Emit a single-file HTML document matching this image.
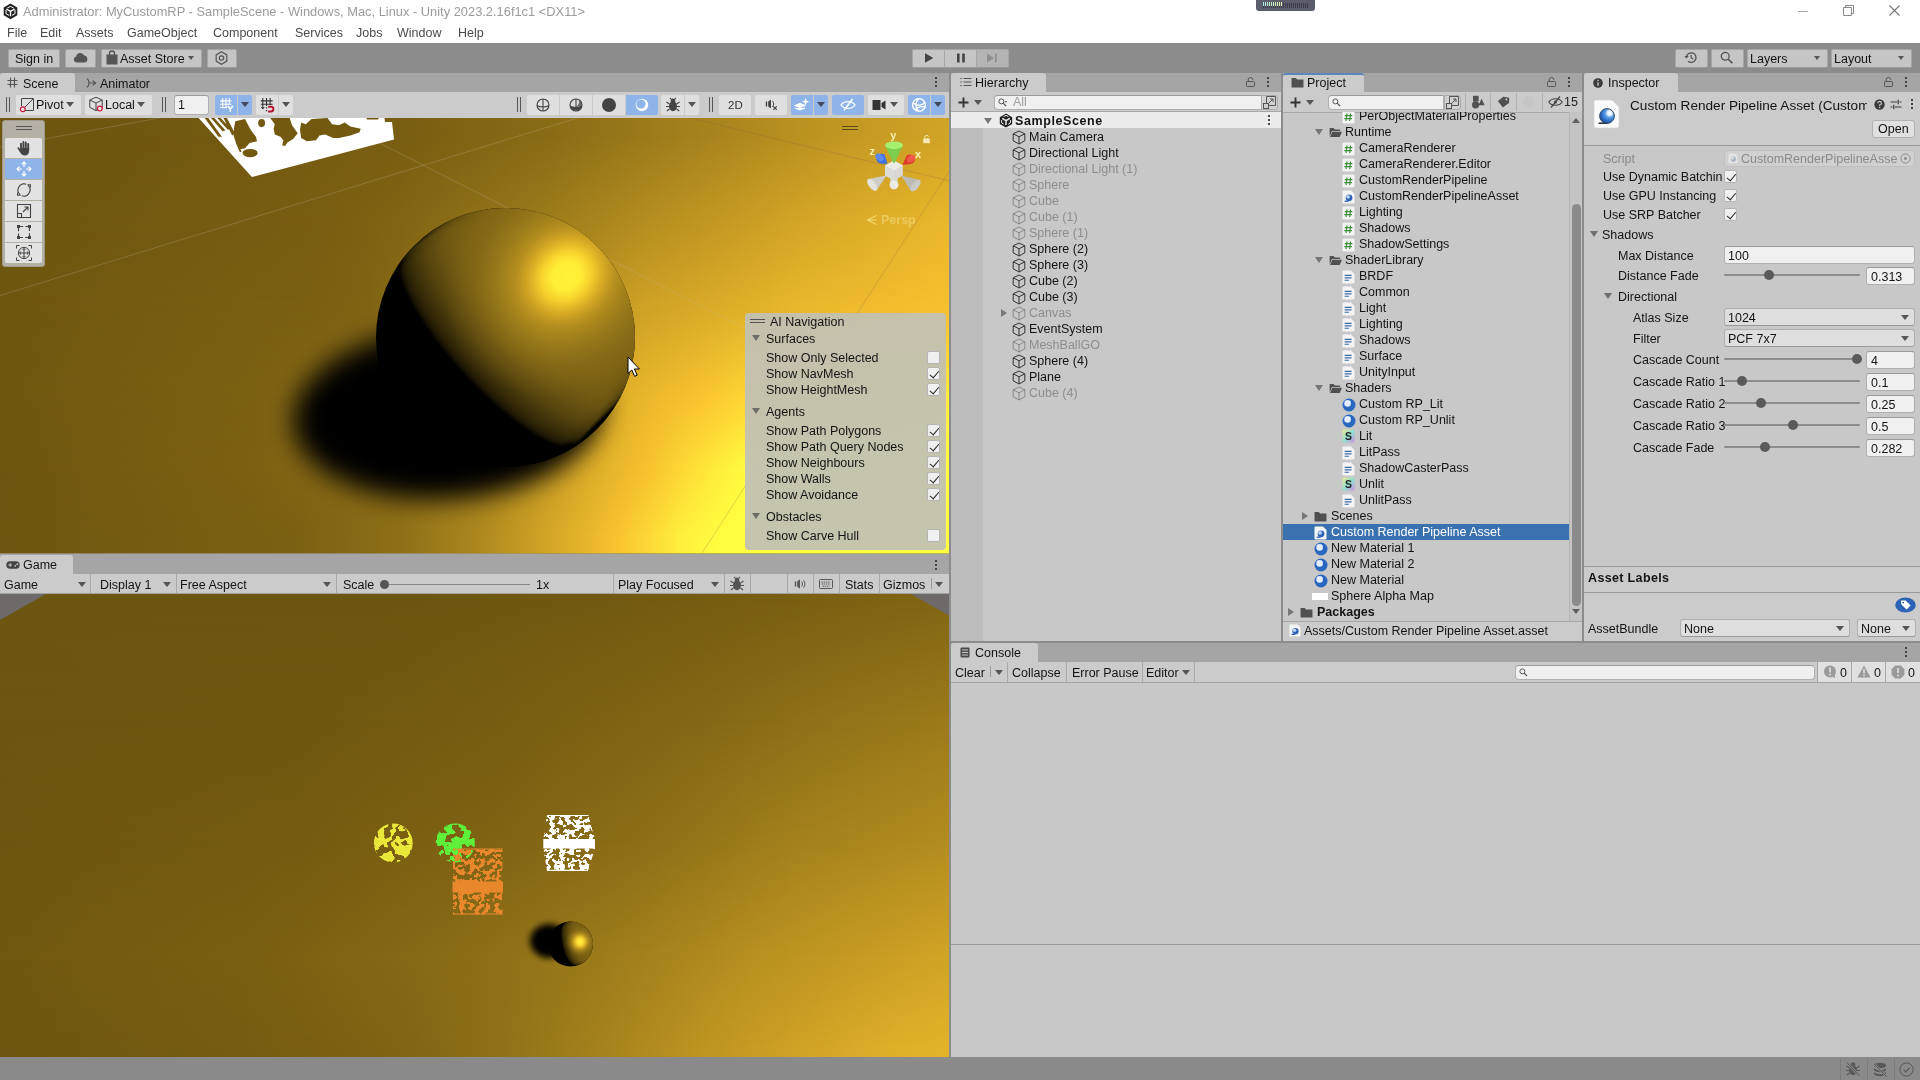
<!DOCTYPE html>
<html><head><meta charset="utf-8"><title>Unity</title>
<style>
*{box-sizing:border-box;margin:0;padding:0}
html,body{will-change:transform;width:1920px;height:1080px;overflow:hidden;background:#c8c8c8;font-family:"Liberation Sans",sans-serif;font-size:12px;color:#141414}
.a{position:absolute}
.t{position:absolute;white-space:nowrap;line-height:14px;font-size:12px;color:#141414}
.btn{position:absolute;background:#dfdfdf;border-radius:2px}
.tb{position:absolute;background:#c5c5c5;border:1px solid #a6a6a6;border-bottom-color:#999;border-radius:2px}
.blue{background:#8fb4ea}
.dim{color:#8c8c8c}
svg{position:absolute;overflow:visible}
.fld{position:absolute;background:#f0f0f0;border:1px solid #b0b0b0;border-top-color:#9a9a9a;border-radius:3px}
.dd{position:absolute;background:#dedede;border:1px solid #b0b0b0;border-bottom-color:#999;border-radius:3px}
.cb{position:absolute;width:13px;height:13px;background:#f0f0f0;border:1px solid #b5b5b5;border-radius:2px}
.tri{position:absolute;width:0;height:0;border-left:4.5px solid transparent;border-right:4.5px solid transparent;border-top:6px solid #555}
.trir{position:absolute;width:0;height:0;border-top:4.5px solid transparent;border-bottom:4.5px solid transparent;border-left:6px solid #777}
.sep{position:absolute;width:1px;background:#a8a8a8}
</style></head><body>
<!-- TITLE BAR -->
<div class="a" style="left:0;top:0;width:1920px;height:43px;background:#fff"></div>
<svg style="left:3px;top:3px" width="15" height="17" viewBox="0 0 15 17"><path d="M7.5 0.5 L14.3 4.4 V12.3 L7.5 16.3 L0.7 12.3 V4.4 Z" fill="#222"/><path d="M7.5 8.4 V13.2 M7.5 8.4 L3.3 6 M7.5 8.4 L11.7 6" stroke="#fff" stroke-width="1.4" fill="none"/><path d="M4.3 5 L7.5 3.4 L10.7 5 M3 7 V10.6 L6 12.4 M12 7 V10.6 L9 12.4" stroke="#fff" stroke-width="1" fill="none"/></svg>
<div class="t" id="title" style="left:23px;top:5px;color:#9b9b9b;font-size:12.87px">Administrator: MyCustomRP - SampleScene - Windows, Mac, Linux - Unity 2023.2.16f1c1 &lt;DX11&gt;</div>
<!-- widget -->
<div class="a" style="left:1256px;top:-3px;width:59px;height:14px;background:#5b5d6b;border-radius:3px"></div>
<div class="a" style="left:1263px;top:3px;width:46px;height:5px;background:repeating-linear-gradient(90deg,#3a3c4a 0 1px,#5b5d6b 1px 2px)"></div>
<div class="a" style="left:1263px;top:2px;width:20px;height:4px;background:repeating-linear-gradient(90deg,transparent 0 1px,#5b5d6b 1px 2px),linear-gradient(90deg,#aee8e0,#c8f0c0 50%,#e8f0a0)"></div>
<!-- window controls -->
<div class="a" style="left:1798px;top:11px;width:10px;height:1px;background:#a8a8a8"></div>
<svg style="left:1843px;top:5px" width="11" height="11" viewBox="0 0 11 11"><path d="M0.5 2.5 H8.5 V10.5 H0.5 Z M2.5 2.5 V0.5 H10.5 V8.5 H8.5" fill="none" stroke="#8a8a8a" stroke-width="1"/></svg>
<svg style="left:1889px;top:5px" width="11" height="11" viewBox="0 0 11 11"><path d="M0.5 0.5 L10.5 10.5 M10.5 0.5 L0.5 10.5" stroke="#777" stroke-width="1.1"/></svg>
<!-- MENU BAR -->
<div class="t mn" style="left:7px">File</div>
<div class="t mn" style="left:40px">Edit</div>
<div class="t mn" style="left:76px">Assets</div>
<div class="t mn" style="left:127px">GameObject</div>
<div class="t mn" style="left:213px">Component</div>
<div class="t mn" style="left:295px">Services</div>
<div class="t mn" style="left:356px">Jobs</div>
<div class="t mn" style="left:397px">Window</div>
<div class="t mn" style="left:458px">Help</div>
<style>.mn{top:26px;font-size:12.5px;color:#4a4a4a}</style>
<!-- MAIN TOOLBAR -->
<div class="a" style="left:0;top:43px;width:1920px;height:30px;background:#8c8c8d"></div>
<div class="tb" style="left:7.5px;top:48.5px;width:52px;height:19px"></div><div class="t" style="left:15px;top:51.5px;font-size:12.5px">Sign in</div>
<div class="tb" style="left:64.5px;top:48.5px;width:31px;height:19px"></div>
<svg style="left:73px;top:52px" width="15" height="11" viewBox="0 0 15 11"><path d="M3.6 10.5 A3.1 3.1 0 0 1 3.2 4.4 A4.2 4.2 0 0 1 11.2 3.6 A3.5 3.5 0 0 1 11.6 10.5 Z" fill="#555"/></svg>
<div class="tb" style="left:100.5px;top:48.5px;width:101px;height:19px"></div>
<svg style="left:106px;top:50px" width="12" height="15" viewBox="0 0 12 15"><path d="M0.5 4.5 H11.5 V14.5 H0.5 Z" fill="#555"/><path d="M3.5 5 V3.5 A2.5 2.5 0 0 1 8.5 3.5 V5" fill="none" stroke="#555" stroke-width="1.3"/></svg>
<div class="t" style="left:120px;top:51.5px;font-size:12.5px">Asset Store</div>
<div class="tri" style="left:188px;top:56px;border-left-width:3.5px;border-right-width:3.5px;border-top-width:4.5px"></div>
<div class="tb" style="left:206.5px;top:48.5px;width:30px;height:19px"></div>
<svg style="left:215px;top:51px" width="13" height="14" viewBox="0 0 13 14"><path d="M6.5 0.8 L11.8 3.9 V10.1 L6.5 13.2 L1.2 10.1 V3.9 Z" fill="none" stroke="#555" stroke-width="1.2"/><circle cx="6.5" cy="7" r="2.2" fill="none" stroke="#555" stroke-width="1.2"/></svg>
<!-- play controls -->
<div class="tb" style="left:911.5px;top:48.5px;width:34px;height:19px;border-radius:2px 0 0 2px"></div>
<div class="tb" style="left:943.5px;top:48.5px;width:34px;height:19px;border-radius:0"></div>
<div class="tb" style="left:975.5px;top:48.5px;width:33px;height:19px;border-radius:0 2px 2px 0;background:#b4b4b4"></div>
<svg style="left:924px;top:53px" width="10" height="10" viewBox="0 0 10 10"><path d="M1 0.3 L9.3 5 L1 9.7 Z" fill="#444"/></svg>
<svg style="left:956px;top:53px" width="10" height="10" viewBox="0 0 10 10"><path d="M1 0.5 H3.6 V9.5 H1 Z M6.2 0.5 H8.8 V9.5 H6.2 Z" fill="#444"/></svg>
<svg style="left:986px;top:53px" width="12" height="10" viewBox="0 0 12 10"><path d="M1 0.5 L8 5 L1 9.5 Z M9 0.5 H10.6 V9.5 H9 Z" fill="#8e8e8e"/></svg>
<!-- right -->
<div class="tb" style="left:1674.5px;top:48.5px;width:33px;height:19px"></div>
<svg style="left:1684px;top:51px" width="14" height="13" viewBox="0 0 14 13"><path d="M2.4 6.5 A4.8 4.8 0 1 1 4 10.2" fill="none" stroke="#555" stroke-width="1.3"/><path d="M0.3 5 L2.5 7.6 L4.8 5 Z" fill="#555"/><path d="M7.2 3.8 V6.8 L9.2 8" fill="none" stroke="#555" stroke-width="1.2"/></svg>
<div class="tb" style="left:1710.5px;top:48.5px;width:33px;height:19px"></div>
<svg style="left:1720px;top:51px" width="14" height="13" viewBox="0 0 14 13"><circle cx="5.2" cy="5.2" r="3.9" fill="none" stroke="#555" stroke-width="1.3"/><path d="M8 8 L12.4 12.2" stroke="#555" stroke-width="1.7"/></svg>
<div class="tb" style="left:1746.5px;top:48.5px;width:81px;height:19px"></div><div class="t" style="left:1750px;top:51.5px;font-size:12.5px">Layers</div>
<div class="tri" style="left:1814px;top:56px;border-left-width:3.5px;border-right-width:3.5px;border-top-width:4.5px"></div>
<div class="tb" style="left:1830.5px;top:48.5px;width:81px;height:19px"></div><div class="t" style="left:1834px;top:51.5px;font-size:12.5px">Layout</div>
<div class="tri" style="left:1898px;top:56px;border-left-width:3.5px;border-right-width:3.5px;border-top-width:4.5px"></div>
<!-- SCENE TAB STRIP -->
<div class="a" style="left:0;top:73px;width:949px;height:19px;background:#a5a5a5"></div>
<div class="a" style="left:0;top:73px;width:75px;height:19px;background:#cbcbcb;border-radius:3px 3px 0 0"></div>
<svg style="left:7px;top:77px" width="11" height="11" viewBox="0 0 11 11"><path d="M3.5 0.5 V10.5 M7.5 0.5 V10.5 M0.5 3.5 H10.5 M0.5 7.5 H10.5" stroke="#555" stroke-width="1.1" fill="none"/></svg>
<div class="t" style="left:23px;top:76.5px;font-size:12.5px">Scene</div>
<svg style="left:86px;top:78px" width="11" height="10" viewBox="0 0 11 10"><path d="M0.8 1 C3.5 1.2 3.5 8.6 0.8 8.8 M2.8 5 H9 M6.8 2.6 L9.6 5 L6.8 7.4" stroke="#555" stroke-width="1.2" fill="none"/></svg>
<div class="t" style="left:100px;top:76.5px;font-size:12.5px">Animator</div>
<div class="a kb" style="left:935px;top:77px"></div>
<style>.kb{width:2px;height:10px;background:radial-gradient(circle at 1px 1px,#444 0 1px,transparent 1.2px) 0 0/2px 4px repeat-y}</style>
<!-- SCENE TOOLBAR -->
<div class="a" style="left:0;top:92px;width:949px;height:26px;background:#cbcbcb"></div>
<div class="a" style="left:6px;top:97px;width:1px;height:15px;background:#555"></div><div class="a" style="left:9px;top:97px;width:1px;height:15px;background:#555"></div>
<div class="btn" style="left:16px;top:95px;width:65px;height:20px"></div>
<svg style="left:19px;top:97px" width="16" height="16" viewBox="0 0 16 16"><path d="M2.5 1.5 H14.5 V13.5 H6" fill="none" stroke="#444" stroke-width="1"/><path d="M2.5 1.5 V9 M5.5 10.5 L14 2" fill="none" stroke="#444" stroke-width="1"/><circle cx="3.8" cy="12.2" r="2.4" fill="#f6e6ea" stroke="#c8143c" stroke-width="1.2"/></svg>
<div class="t" style="left:36px;top:98px;font-size:12.5px">Pivot</div>
<div class="tri" style="left:66px;top:102px;border-left-width:4.5px;border-right-width:4.5px;border-top-width:5.5px"></div>
<div class="btn" style="left:85px;top:95px;width:67px;height:20px"></div>
<svg style="left:88px;top:96px" width="17" height="17" viewBox="0 0 17 17"><path d="M8 1.2 L14.2 4 V11.4 L8 14.6 L1.8 11.4 V4 Z M1.8 4 L8 7 L14.2 4 M8 7 V14.6" fill="none" stroke="#444" stroke-width="1"/><circle cx="11.8" cy="12.6" r="2.4" fill="#f6e6ea" stroke="#c8143c" stroke-width="1.2"/></svg>
<div class="t" style="left:105px;top:98px;font-size:12.5px">Local</div>
<div class="tri" style="left:137px;top:102px;border-left-width:4.5px;border-right-width:4.5px;border-top-width:5.5px"></div>
<div class="a" style="left:162px;top:97px;width:1px;height:15px;background:#555"></div><div class="a" style="left:165px;top:97px;width:1px;height:15px;background:#555"></div>
<div class="fld" style="left:174px;top:95px;width:35px;height:20px"></div><div class="t" style="left:178px;top:98px;font-size:12.5px">1</div>
<div class="btn blue" style="left:215px;top:95px;width:22px;height:20px;border-radius:2px 0 0 2px"></div>
<svg style="left:219px;top:97px" width="15" height="15" viewBox="0 0 15 15"><path d="M3.7 1 V11.6 M7 1 V11.6 M10.3 1 V7.4 M1 3.9 H12.6 M1 7.2 H12.6 M1 10.5 H8" stroke="#fff" stroke-width="1.1" fill="none"/><path d="M8.7 8.9 L11.3 11.8 L13.9 8.9 M11.3 11.8 V14.7" stroke="#fff" stroke-width="1.5" fill="none"/></svg>
<div class="btn blue" style="left:238px;top:95px;width:14px;height:20px;border-radius:0 2px 2px 0"></div>
<div class="tri" style="left:241px;top:102px;border-left-width:4.5px;border-right-width:4.5px;border-top-width:5.5px;border-top-color:#3e4a5a"></div>
<div class="btn" style="left:256px;top:95px;width:22px;height:20px;border-radius:2px 0 0 2px"></div>
<svg style="left:260px;top:97px" width="15" height="15" viewBox="0 0 15 15"><path d="M2.8 1 V11.6 M6.5 1 V9 M10.1 1 V8 M0.8 3.9 H12.6 M0.8 7.2 H12.6" stroke="#333" stroke-width="1.1" fill="none"/><path d="M1.4 10 L2.8 12 L4.2 10" fill="none" stroke="#333" stroke-width="1"/><path d="M5.9 10.2 h1.3 v1.3 h-1.3 Z M5.9 12.9 h1.3 v1.3 h-1.3 Z" fill="#333"/><path d="M8.2 9.7 H11 A2.4 2.4 0 0 1 11 14.5 H8.2" stroke="#b4102e" stroke-width="1.9" fill="none"/></svg>
<div class="btn" style="left:279px;top:95px;width:14px;height:20px;border-radius:0 2px 2px 0"></div>
<div class="tri" style="left:282px;top:102px;border-left-width:4.5px;border-right-width:4.5px;border-top-width:5.5px"></div>
<!-- right cluster -->
<div class="a" style="left:517px;top:97px;width:1px;height:15px;background:#555"></div><div class="a" style="left:520px;top:97px;width:1px;height:15px;background:#555"></div>
<div class="btn" style="left:527px;top:95px;width:32px;height:20px;border-radius:2px 0 0 2px"></div>
<svg style="left:536px;top:98px" width="14" height="14" viewBox="0 0 14 14"><circle cx="7" cy="7" r="6" fill="none" stroke="#444" stroke-width="1.1"/><path d="M7 1 V13 M1 7.5 C4 9.5 10 9.5 13 7.5" fill="none" stroke="#444" stroke-width="1.1"/></svg>
<div class="btn" style="left:560px;top:95px;width:32px;height:20px;border-radius:0"></div>
<svg style="left:569px;top:98px" width="14" height="14" viewBox="0 0 14 14"><circle cx="7" cy="7" r="6" fill="none" stroke="#444" stroke-width="1.1"/><path d="M7 1 V9" fill="none" stroke="#444" stroke-width="1.1"/><path d="M1.1 7.6 C4 9.4 10 9.4 12.9 7.6 A6 6 0 0 1 1.1 7.6 Z" fill="#444"/><path d="M7 9 C9 9 11.5 8.5 12.9 7.6 A6 6 0 0 0 10 2 C10.6 4 10 7 7 9 Z" fill="#444" opacity=".75"/></svg>
<div class="btn" style="left:593px;top:95px;width:32px;height:20px;border-radius:0"></div>
<div class="a" style="left:602px;top:98px;width:14px;height:14px;border-radius:50%;background:#444"></div>
<div class="btn blue" style="left:626px;top:95px;width:32px;height:20px;border-radius:0 2px 2px 0"></div>
<svg style="left:635px;top:98px" width="14" height="14" viewBox="0 0 14 14"><circle cx="7" cy="7" r="6.2" fill="#fff"/><circle cx="6" cy="6" r="4.6" fill="#8fb4ea"/></svg>
<div class="btn" style="left:661px;top:95px;width:23px;height:20px;border-radius:2px 0 0 2px"></div>
<svg style="left:665px;top:97px" width="16" height="16" viewBox="0 0 16 16"><ellipse cx="8" cy="9.2" rx="4" ry="5" fill="#444"/><circle cx="8" cy="4" r="2.4" fill="#444"/><path d="M4.5 7 L1.5 5 M4 9.5 H1 M4.5 12 L1.8 14 M11.5 7 L14.5 5 M12 9.5 H15 M11.5 12 L14.2 14 M6.5 2.5 L5 0.8 M9.5 2.5 L11 0.8" stroke="#444" stroke-width="1.1"/></svg>
<div class="btn" style="left:685px;top:95px;width:14px;height:20px;border-radius:0 2px 2px 0"></div>
<div class="tri" style="left:688px;top:102px;border-left-width:4.5px;border-right-width:4.5px;border-top-width:5.5px"></div>
<div class="a" style="left:709px;top:97px;width:1px;height:15px;background:#555"></div><div class="a" style="left:712px;top:97px;width:1px;height:15px;background:#555"></div>
<div class="btn" style="left:719px;top:95px;width:32px;height:20px"></div><div class="t" style="left:728px;top:98px;font-size:11.5px;color:#333">2D</div>
<div class="btn" style="left:755px;top:95px;width:32px;height:20px"></div>
<svg style="left:765px;top:99px" width="13" height="12" viewBox="0 0 13 12"><path d="M0.8 2.5 H2.2 V7.5 H0.8 Z M3.2 2.5 L6 0.5 V9.5 L3.2 7.5 Z" fill="#444"/><path d="M7.5 2 C9 3.5 9 6.5 7.5 8" stroke="#444" stroke-width="1" fill="none"/><path d="M8.3 7.3 L11.8 10.8 M11.8 7.3 L8.3 10.8" stroke="#444" stroke-width="1.2"/></svg>
<div class="btn blue" style="left:791px;top:95px;width:22px;height:20px;border-radius:2px 0 0 2px"></div>
<svg style="left:794px;top:97px" width="16" height="16" viewBox="0 0 16 16"><path d="M1 8.5 L6 6.5 L11 8.5 L6 10.5 Z M1 11 L6 13 L11 11" fill="#fff" stroke="#fff" stroke-width="1.2" stroke-linejoin="round"/><path d="M11.5 1 L12.5 3.8 L15.2 4.8 L12.5 5.8 L11.5 8.6 L10.5 5.8 L7.8 4.8 L10.5 3.8 Z" fill="#fff"/></svg>
<div class="btn blue" style="left:814px;top:95px;width:14px;height:20px;border-radius:0 2px 2px 0"></div>
<div class="tri" style="left:817px;top:102px;border-left-width:4.5px;border-right-width:4.5px;border-top-width:5.5px;border-top-color:#3e4a5a"></div>
<div class="btn blue" style="left:832px;top:95px;width:32px;height:20px"></div>
<svg style="left:840px;top:98px" width="16" height="14" viewBox="0 0 16 14"><path d="M1 7 C4 2.5 12 2.5 15 7 C12 11.5 4 11.5 1 7 Z" fill="none" stroke="#fff" stroke-width="1.3"/><path d="M4 12.5 L12.5 1" stroke="#fff" stroke-width="1.4"/></svg>
<div class="btn" style="left:868px;top:95px;width:36px;height:20px"></div>
<svg style="left:872px;top:99px" width="15" height="12" viewBox="0 0 15 12"><path d="M0.5 1 H8.5 V11 H0.5 Z M9.5 4 L13.5 1.5 V10.5 L9.5 8 Z" fill="#333"/></svg>
<div class="tri" style="left:890px;top:102px;border-left-width:4.5px;border-right-width:4.5px;border-top-width:5.5px"></div>
<div class="btn blue" style="left:908px;top:95px;width:22px;height:20px;border-radius:2px 0 0 2px"></div>
<svg style="left:911px;top:97px" width="16" height="16" viewBox="0 0 16 16"><circle cx="8" cy="8" r="6.4" fill="none" stroke="#fff" stroke-width="1.4"/><path d="M8 1.6 C4 5 4 11 8 14.4 M2 6 C6 9 11 9 14 5.5 M4 13 C7 9.5 12 9.5 14.2 10" fill="none" stroke="#fff" stroke-width="1.3"/></svg>
<div class="btn blue" style="left:931px;top:95px;width:14px;height:20px;border-radius:0 2px 2px 0"></div>
<div class="tri" style="left:934px;top:102px;border-left-width:4.5px;border-right-width:4.5px;border-top-width:5.5px;border-top-color:#3e4a5a"></div>
<!-- SCENE VIEW -->
<div class="a" id="scene" style="left:0;top:118px;width:949px;height:435px;overflow:hidden;background:#6e5710">
<div class="a" style="left:0;top:0;width:949px;height:435px;background:linear-gradient(90deg,#6e5610 0.0%,#6f5710 10.5%,#785e12 42.1%,#8a6c16 58.0%,#a6821d 73.8%,#c39923 89.6%,#d1a426 100.0%)"></div>
<div class="a" style="left:0;top:17px;width:949px;height:418px;background:linear-gradient(90deg,#6e5610 0.0%,#775d12 31.6%,#816514 42.1%,#947419 52.7%,#b68f20 68.5%,#d4a627 84.3%,#ebb82c 100.0%);-webkit-mask-image:linear-gradient(180deg,transparent 0,#000 21.53%);mask-image:linear-gradient(180deg,transparent 0,#000 21.53%)"></div>
<div class="a" style="left:0;top:107px;width:949px;height:328px;background:linear-gradient(90deg,#6f5710 0.0%,#7a6013 31.6%,#806414 39.0%,#a4811c 52.7%,#cea226 67.4%,#eab82c 84.3%,#f6c12f 100.0%);-webkit-mask-image:linear-gradient(180deg,transparent 0,#000 25.91%);mask-image:linear-gradient(180deg,transparent 0,#000 25.91%)"></div>
<div class="a" style="left:0;top:192px;width:949px;height:243px;background:linear-gradient(90deg,#6f5710 0.0%,#7b6113 26.3%,#8e6f17 42.1%,#b89021 54.8%,#e8b62b 67.4%,#fac430 73.8%,#ffd434 78.0%,#ffec3b 100.0%);-webkit-mask-image:linear-gradient(180deg,transparent 0,#000 37.04%);mask-image:linear-gradient(180deg,transparent 0,#000 37.04%)"></div>
<div class="a" style="left:0;top:282px;width:949px;height:153px;background:linear-gradient(90deg,#6e5610 0.0%,#7c6113 26.3%,#8e6f17 42.1%,#b08a1f 52.7%,#e0b02a 63.2%,#f8c32f 68.5%,#ffe438 73.8%,#fffa3f 78.0%,#ffff42 100.0%);-webkit-mask-image:linear-gradient(180deg,transparent 0,#000 45.75%);mask-image:linear-gradient(180deg,transparent 0,#000 45.75%)"></div>
<div class="a" style="left:0;top:352px;width:949px;height:83px;background:linear-gradient(90deg,#6e5610 0.0%,#7b6113 31.6%,#8e6f17 42.1%,#ad881e 50.6%,#d9aa28 59.0%,#fac430 65.3%,#ffef3c 71.7%,#fffe40 75.9%,#ffff42 100.0%);-webkit-mask-image:linear-gradient(180deg,transparent 0,#000 79.52%);mask-image:linear-gradient(180deg,transparent 0,#000 79.52%)"></div>
<!-- grid lines -->
<svg style="left:0;top:0" width="949" height="435" viewBox="0 118 949 435">
<g stroke="#c9bfae" stroke-opacity="0.24" stroke-width="1" fill="none">
<path d="M0 295.5 L600 111"/><path d="M0 147 L170 116"/><path d="M322 114 L745 328"/>
</g>
<g stroke="#8a5a50" stroke-opacity="0.25" stroke-width="1" fill="none">
<path d="M690 118 L950 181"/><path d="M950 170 L702 553"/>
</g>
</svg>
<!-- white cube w/ holes -->
<svg style="left:0;top:0" width="949" height="435" viewBox="0 118 949 435">
<path d="M198.6 118 L251.9 177 L394 139.6 L392 122 L385 122 L384.5 118 Z" fill="#fff"/>
<g transform="translate(190,115) scale(0.11458)" fill="#73590f">
<path d="M395 55 L480 35 L530 130 L575 190 L585 230 L520 245 L480 290 L440 300 L400 240 L380 180 L385 110 Z"/>
<ellipse cx="625" cy="70" rx="30" ry="36"/>
<path d="M700 26 L870 26 L890 90 L940 160 L900 210 L850 240 L830 270 L805 265 L815 220 L790 190 L740 170 L730 120 L740 80 Z"/>
<path d="M970 65 L1010 80 L1060 35 L1200 26 L1240 80 L1300 90 L1350 65 L1400 100 L1490 120 L1480 150 L1400 180 L1300 200 L1250 200 L1180 170 L1130 180 L1100 220 L1020 230 L970 200 L960 130 Z"/>
<ellipse cx="525" cy="332" rx="66" ry="36"/>
<path d="M1540 26 H1650 L1640 40 H1545 Z"/>
<path d="M128 26 L160 26 L278 190 L248 190 Z M183 26 L213 26 L310 135 L284 142 Z M238 26 L268 26 L355 120 L330 128 Z M292 26 L322 26 L392 160 L368 178 Z M400 245 L415 240 L450 320 L435 325 Z"/>
</g>
</svg>
<!-- shadow -->
<div class="a" style="left:293px;top:209px;width:310px;height:172px;border-radius:50%;background:#000;filter:blur(13px);transform:rotate(-4deg)"></div>
<svg style="left:0;top:0" width="949" height="435" viewBox="0 0 949 435">
<defs><clipPath id="s1c"><circle cx="505.5" cy="219.5" r="129.5"/></clipPath>
<filter id="s1b" color-interpolation-filters="sRGB" x="-20%" y="-20%" width="140%" height="140%"><feGaussianBlur stdDeviation="1.20"/></filter>
<radialGradient id="s1h" gradientUnits="userSpaceOnUse" cx="0" cy="0" r="130.0" gradientTransform="translate(566.0 158.0) rotate(-45.0) scale(1 0.880)">
<stop offset="0.000" stop-color="#fff238" stop-opacity="1.000"/>
<stop offset="0.115" stop-color="#ffee35" stop-opacity="1.000"/>
<stop offset="0.200" stop-color="#fcd82e" stop-opacity="0.960"/>
<stop offset="0.310" stop-color="#e8b828" stop-opacity="0.820"/>
<stop offset="0.420" stop-color="#d4a624" stop-opacity="0.620"/>
<stop offset="0.580" stop-color="#c09822" stop-opacity="0.420"/>
<stop offset="0.770" stop-color="#ac8820" stop-opacity="0.200"/>
<stop offset="1.000" stop-color="#a08020" stop-opacity="0.000"/>
</radialGradient>
</defs>
<g clip-path="url(#s1c)"><rect x="374.0" y="88.0" width="263.0" height="263.0" fill="#000"/><g filter="url(#s1b)">
<path fill="#010100" d="M402.5 138.0 L399.2 153.4 L401.6 163.5 L405.1 172.6 L409.2 181.3 L413.7 189.5 L418.5 197.5 L423.5 205.3 L428.7 212.9 L434.0 220.4 L439.6 227.6 L445.3 234.8 L451.1 241.8 L457.1 248.7 L463.1 255.5 L469.4 262.1 L475.7 268.7 L482.2 275.1 L488.9 281.4 L495.6 287.5 L502.6 293.5 L509.7 299.4 L517.0 305.0 L524.6 310.4 L532.4 315.6 L540.7 320.4 L549.5 324.7 L559.3 328.0 L575.0 326.0 L575.0 326.0 L756.9 146.8 L750.7 140.1 L744.6 133.4 L738.4 126.7 L732.3 119.9 L726.1 113.2 L719.9 106.5 L713.8 99.8 L707.6 93.1 L701.5 86.4 L695.3 79.6 L689.1 72.9 L683.0 66.2 L676.8 59.5 L670.7 52.8 L664.5 46.1 L658.3 39.3 L652.2 32.6 L646.0 25.9 L639.9 19.2 L633.7 12.5 L627.5 5.8 L621.4 -1.0 L615.2 -7.7 L609.0 -14.4 L602.9 -21.1 L596.7 -27.8 L402.5 138.0Z"/>
<path fill="#070601" d="M402.8 137.7 L399.5 153.1 L401.9 163.2 L405.5 172.4 L409.5 181.0 L414.0 189.3 L418.8 197.3 L423.8 205.0 L429.0 212.6 L434.3 220.1 L439.9 227.4 L445.6 234.5 L451.4 241.5 L457.4 248.4 L463.5 255.2 L469.7 261.9 L476.0 268.4 L482.5 274.8 L489.2 281.1 L495.9 287.2 L502.9 293.2 L510.0 299.1 L517.3 304.7 L524.9 310.2 L532.7 315.3 L541.0 320.1 L549.8 324.4 L559.6 327.7 L575.3 325.7 L575.3 325.7 L756.9 146.8 L750.7 140.1 L744.6 133.4 L738.4 126.7 L732.3 119.9 L726.1 113.2 L719.9 106.5 L713.8 99.8 L707.6 93.1 L701.5 86.4 L695.3 79.6 L689.1 72.9 L683.0 66.2 L676.8 59.5 L670.7 52.8 L664.5 46.1 L658.3 39.3 L652.2 32.6 L646.0 25.9 L639.9 19.2 L633.7 12.5 L627.5 5.8 L621.4 -1.0 L615.2 -7.7 L609.1 -14.4 L602.9 -21.1 L596.7 -27.8 L402.8 137.7Z"/>
<path fill="#0f0c02" d="M403.4 137.2 L400.0 152.6 L402.5 162.7 L406.0 171.8 L410.1 180.5 L414.6 188.7 L419.3 196.7 L424.3 204.5 L429.5 212.1 L434.9 219.5 L440.4 226.8 L446.1 234.0 L452.0 241.0 L457.9 247.9 L464.0 254.7 L470.3 261.3 L476.6 267.9 L483.1 274.3 L489.7 280.6 L496.5 286.7 L503.5 292.7 L510.6 298.5 L517.9 304.2 L525.5 309.6 L533.3 314.8 L541.6 319.6 L550.4 323.9 L560.2 327.2 L575.9 325.2 L575.9 325.2 L756.9 146.8 L750.7 140.1 L744.6 133.4 L738.4 126.7 L732.3 119.9 L726.1 113.2 L719.9 106.5 L713.8 99.8 L707.6 93.1 L701.5 86.4 L695.3 79.6 L689.1 72.9 L683.0 66.2 L676.8 59.5 L670.7 52.8 L664.5 46.1 L658.3 39.3 L652.2 32.6 L646.0 25.9 L639.9 19.2 L633.7 12.5 L627.5 5.8 L621.4 -1.0 L615.2 -7.7 L609.1 -14.4 L602.9 -21.1 L596.7 -27.8 L403.4 137.2Z"/>
<path fill="#171204" d="M404.1 136.5 L400.8 151.9 L403.3 162.0 L406.8 171.2 L410.8 179.8 L415.3 188.1 L420.1 196.1 L425.1 203.8 L430.3 211.4 L435.7 218.9 L441.2 226.2 L446.9 233.3 L452.7 240.3 L458.7 247.2 L464.8 254.0 L471.0 260.7 L477.3 267.2 L483.8 273.6 L490.5 279.9 L497.2 286.0 L504.2 292.0 L511.3 297.9 L518.6 303.5 L526.2 308.9 L534.0 314.1 L542.3 318.9 L551.1 323.2 L560.9 326.5 L576.6 324.5 L576.6 324.5 L756.9 146.8 L750.7 140.1 L744.6 133.4 L738.4 126.7 L732.3 119.9 L726.1 113.2 L719.9 106.5 L713.8 99.8 L707.6 93.1 L701.5 86.4 L695.3 79.6 L689.1 72.9 L683.0 66.2 L676.8 59.5 L670.7 52.8 L664.5 46.1 L658.3 39.4 L652.2 32.6 L646.0 25.9 L639.9 19.2 L633.7 12.5 L627.5 5.8 L621.4 -0.9 L615.2 -7.7 L609.1 -14.4 L602.9 -21.1 L596.7 -27.8 L404.1 136.5Z"/>
<path fill="#1c1604" d="M405.0 135.7 L401.7 151.2 L404.1 161.2 L407.7 170.4 L411.7 179.0 L416.2 187.3 L421.0 195.3 L426.0 203.1 L431.2 210.7 L436.5 218.1 L442.1 225.4 L447.8 232.5 L453.6 239.5 L459.5 246.4 L465.6 253.2 L471.9 259.9 L478.2 266.4 L484.7 272.8 L491.3 279.1 L498.1 285.2 L505.1 291.2 L512.2 297.1 L519.5 302.7 L527.1 308.1 L534.9 313.3 L543.1 318.1 L551.9 322.4 L561.8 325.7 L577.4 323.7 L577.4 323.7 L756.9 146.8 L750.7 140.1 L744.6 133.4 L738.4 126.6 L732.2 119.9 L726.1 113.2 L719.9 106.5 L713.8 99.8 L707.6 93.1 L701.5 86.4 L695.3 79.6 L689.1 72.9 L683.0 66.2 L676.8 59.5 L670.7 52.8 L664.5 46.1 L658.3 39.4 L652.2 32.6 L646.0 25.9 L639.9 19.2 L633.7 12.5 L627.6 5.8 L621.4 -0.9 L615.2 -7.6 L609.1 -14.4 L602.9 -21.1 L596.8 -27.8 L405.0 135.7Z"/>
<path fill="#211b05" d="M406.0 134.9 L402.7 150.3 L405.2 160.4 L408.7 169.5 L412.7 178.1 L417.2 186.4 L422.0 194.4 L427.0 202.2 L432.2 209.8 L437.5 217.2 L443.1 224.5 L448.8 231.6 L454.6 238.6 L460.5 245.5 L466.6 252.3 L472.9 258.9 L479.2 265.5 L485.7 271.9 L492.3 278.2 L499.1 284.3 L506.0 290.3 L513.2 296.1 L520.5 301.8 L528.0 307.2 L535.9 312.4 L544.1 317.2 L552.9 321.5 L562.8 324.8 L578.4 322.8 L578.4 322.8 L756.9 146.8 L750.7 140.0 L744.5 133.3 L738.4 126.6 L732.2 119.9 L726.1 113.2 L719.9 106.5 L713.8 99.8 L707.6 93.1 L701.4 86.3 L695.3 79.6 L689.1 72.9 L683.0 66.2 L676.8 59.5 L670.7 52.8 L664.5 46.1 L658.3 39.4 L652.2 32.7 L646.0 25.9 L639.9 19.2 L633.7 12.5 L627.6 5.8 L621.4 -0.9 L615.3 -7.6 L609.1 -14.3 L602.9 -21.0 L596.8 -27.8 L406.0 134.9Z"/>
<path fill="#261e06" d="M407.2 133.9 L403.8 149.3 L406.3 159.4 L409.8 168.5 L413.9 177.2 L418.3 185.4 L423.1 193.4 L428.1 201.2 L433.3 208.8 L438.7 216.2 L444.2 223.5 L449.9 230.6 L455.7 237.6 L461.6 244.5 L467.7 251.3 L474.0 257.9 L480.3 264.5 L486.8 270.9 L493.4 277.1 L500.2 283.3 L507.1 289.3 L514.2 295.1 L521.5 300.7 L529.1 306.2 L536.9 311.3 L545.2 316.1 L554.0 320.4 L563.8 323.7 L579.4 321.7 L579.4 321.7 L756.8 146.7 L750.7 140.0 L744.5 133.3 L738.3 126.6 L732.2 119.9 L726.0 113.2 L719.9 106.5 L713.7 99.7 L707.6 93.0 L701.4 86.3 L695.3 79.6 L689.1 72.9 L683.0 66.2 L676.8 59.5 L670.7 52.8 L664.5 46.1 L658.4 39.4 L652.2 32.7 L646.1 26.0 L639.9 19.2 L633.7 12.5 L627.6 5.8 L621.4 -0.9 L615.3 -7.6 L609.1 -14.3 L603.0 -21.0 L596.8 -27.7 L407.2 133.9Z"/>
<path fill="#2b2207" d="M408.4 132.9 L405.1 148.3 L407.5 158.4 L411.1 167.5 L415.1 176.1 L419.6 184.4 L424.3 192.3 L429.3 200.1 L434.5 207.7 L439.9 215.1 L445.4 222.4 L451.1 229.5 L456.9 236.5 L462.9 243.4 L468.9 250.2 L475.2 256.8 L481.5 263.3 L488.0 269.7 L494.6 276.0 L501.4 282.1 L508.3 288.1 L515.4 294.0 L522.7 299.6 L530.3 305.0 L538.1 310.2 L546.3 315.0 L555.1 319.2 L564.9 322.6 L580.6 320.6 L580.6 320.6 L756.7 146.6 L750.6 139.9 L744.5 133.2 L738.3 126.5 L732.2 119.8 L726.0 113.1 L719.9 106.4 L713.7 99.7 L707.6 93.0 L701.4 86.3 L695.3 79.6 L689.1 72.9 L683.0 66.2 L676.8 59.5 L670.7 52.8 L664.5 46.1 L658.4 39.4 L652.2 32.7 L646.1 26.0 L639.9 19.3 L633.8 12.6 L627.6 5.9 L621.5 -0.8 L615.3 -7.5 L609.2 -14.2 L603.0 -20.9 L596.9 -27.6 L408.4 132.9Z"/>
<path fill="#2f2608" d="M409.8 131.8 L406.4 147.2 L408.9 157.3 L412.4 166.4 L416.5 175.0 L420.9 183.2 L425.7 191.2 L430.7 199.0 L435.8 206.5 L441.2 214.0 L446.7 221.2 L452.4 228.3 L458.2 235.3 L464.2 242.2 L470.2 249.0 L476.4 255.6 L482.8 262.1 L489.3 268.5 L495.9 274.8 L502.6 280.9 L509.6 286.9 L516.7 292.7 L524.0 298.4 L531.5 303.8 L539.3 308.9 L547.5 313.7 L556.3 318.0 L566.1 321.3 L581.8 319.3 L581.8 319.3 L756.7 146.6 L750.5 139.9 L744.4 133.2 L738.2 126.5 L732.1 119.8 L726.0 113.1 L719.8 106.4 L713.7 99.7 L707.5 93.0 L701.4 86.3 L695.2 79.6 L689.1 72.9 L683.0 66.2 L676.8 59.5 L670.7 52.8 L664.5 46.1 L658.4 39.4 L652.2 32.7 L646.1 26.0 L640.0 19.3 L633.8 12.6 L627.7 5.9 L621.5 -0.8 L615.4 -7.5 L609.3 -14.2 L603.1 -20.9 L597.0 -27.6 L409.8 131.8Z"/>
<path fill="#342908" d="M411.2 130.7 L407.9 146.1 L410.4 156.1 L413.9 165.2 L417.9 173.8 L422.4 182.0 L427.1 190.0 L432.1 197.8 L437.3 205.3 L442.6 212.7 L448.2 220.0 L453.8 227.1 L459.6 234.1 L465.6 241.0 L471.6 247.7 L477.8 254.3 L484.2 260.8 L490.6 267.2 L497.2 273.5 L504.0 279.6 L510.9 285.6 L518.0 291.4 L525.3 297.0 L532.8 302.4 L540.6 307.6 L548.8 312.4 L557.6 316.6 L567.4 319.9 L583.0 318.0 L583.0 318.0 L756.6 146.4 L750.4 139.8 L744.3 133.1 L738.2 126.4 L732.0 119.7 L725.9 113.0 L719.8 106.3 L713.6 99.6 L707.5 92.9 L701.4 86.2 L695.2 79.6 L689.1 72.9 L683.0 66.2 L676.8 59.5 L670.7 52.8 L664.5 46.1 L658.4 39.4 L652.3 32.7 L646.1 26.1 L640.0 19.4 L633.9 12.7 L627.7 6.0 L621.6 -0.7 L615.5 -7.4 L609.3 -14.1 L603.2 -20.8 L597.1 -27.4 L411.2 130.7Z"/>
<path fill="#372c09" d="M412.8 129.5 L409.5 144.9 L411.9 154.9 L415.4 164.0 L419.5 172.6 L423.9 180.8 L428.7 188.7 L433.6 196.5 L438.8 204.0 L444.2 211.4 L449.7 218.7 L455.3 225.8 L461.1 232.8 L467.0 239.6 L473.1 246.4 L479.3 253.0 L485.6 259.5 L492.1 265.8 L498.7 272.1 L505.4 278.2 L512.3 284.2 L519.4 290.0 L526.7 295.6 L534.2 301.0 L542.0 306.1 L550.2 310.9 L558.9 315.2 L568.7 318.5 L584.3 316.5 L584.3 316.5 L756.4 146.3 L750.3 139.6 L744.2 132.9 L738.1 126.3 L731.9 119.6 L725.8 112.9 L719.7 106.2 L713.6 99.6 L707.4 92.9 L701.3 86.2 L695.2 79.5 L689.1 72.9 L682.9 66.2 L676.8 59.5 L670.7 52.8 L664.6 46.1 L658.4 39.5 L652.3 32.8 L646.2 26.1 L640.1 19.4 L633.9 12.8 L627.8 6.1 L621.7 -0.6 L615.6 -7.3 L609.4 -14.0 L603.3 -20.6 L597.2 -27.3 L412.8 129.5Z"/>
<path fill="#3b2f09" d="M414.5 128.3 L411.2 143.6 L413.6 153.7 L417.1 162.7 L421.2 171.3 L425.6 179.5 L430.3 187.4 L435.3 195.2 L440.4 202.7 L445.8 210.1 L451.3 217.3 L456.9 224.4 L462.7 231.4 L468.6 238.2 L474.7 244.9 L480.8 251.5 L487.1 258.0 L493.6 264.4 L500.2 270.6 L506.9 276.7 L513.8 282.7 L520.8 288.5 L528.1 294.1 L535.6 299.5 L543.4 304.6 L551.6 309.3 L560.3 313.6 L570.1 316.9 L585.6 314.9 L585.6 314.9 L756.3 146.1 L750.2 139.5 L744.1 132.8 L737.9 126.1 L731.8 119.5 L725.7 112.8 L719.6 106.1 L713.5 99.5 L707.4 92.8 L701.3 86.2 L695.2 79.5 L689.0 72.8 L682.9 66.2 L676.8 59.5 L670.7 52.8 L664.6 46.2 L658.5 39.5 L652.4 32.8 L646.3 26.2 L640.1 19.5 L634.0 12.8 L627.9 6.2 L621.8 -0.5 L615.7 -7.1 L609.6 -13.8 L603.5 -20.5 L597.4 -27.1 L414.5 128.3Z"/>
<path fill="#3f320a" d="M416.3 127.1 L413.0 142.4 L415.4 152.4 L418.9 161.4 L422.9 170.0 L427.3 178.2 L432.1 186.1 L437.0 193.8 L442.2 201.3 L447.5 208.7 L453.0 215.9 L458.6 222.9 L464.4 229.9 L470.3 236.7 L476.3 243.4 L482.5 250.0 L488.8 256.5 L495.2 262.8 L501.7 269.0 L508.5 275.1 L515.3 281.1 L522.4 286.8 L529.6 292.4 L537.1 297.8 L544.9 302.9 L553.0 307.7 L561.8 311.9 L571.5 315.2 L587.0 313.3 L587.0 313.3 L756.1 145.9 L750.0 139.3 L743.9 132.6 L737.8 126.0 L731.7 119.3 L725.6 112.7 L719.5 106.0 L713.4 99.4 L707.3 92.7 L701.2 86.1 L695.1 79.4 L689.0 72.8 L682.9 66.1 L676.8 59.5 L670.7 52.8 L664.6 46.2 L658.5 39.6 L652.4 32.9 L646.3 26.3 L640.2 19.6 L634.1 13.0 L628.0 6.3 L621.9 -0.3 L615.8 -7.0 L609.7 -13.6 L603.6 -20.3 L597.5 -26.9 L416.3 127.1Z"/>
<path fill="#43350b" d="M418.1 125.9 L414.9 141.1 L417.3 151.1 L420.8 160.1 L424.8 168.6 L429.2 176.8 L433.9 184.7 L438.8 192.3 L444.0 199.8 L449.3 207.2 L454.7 214.4 L460.4 221.4 L466.1 228.4 L472.0 235.2 L478.0 241.9 L484.2 248.4 L490.4 254.9 L496.8 261.2 L503.4 267.4 L510.1 273.5 L516.9 279.4 L524.0 285.2 L531.2 290.7 L538.7 296.1 L546.4 301.2 L554.5 305.9 L563.2 310.2 L573.0 313.5 L588.4 311.5 L588.4 311.5 L755.9 145.7 L749.8 139.1 L743.7 132.4 L737.6 125.8 L731.5 119.2 L725.5 112.5 L719.4 105.9 L713.3 99.3 L707.2 92.6 L701.1 86.0 L695.1 79.4 L689.0 72.8 L682.9 66.1 L676.8 59.5 L670.7 52.9 L664.7 46.2 L658.6 39.6 L652.5 33.0 L646.4 26.3 L640.3 19.7 L634.3 13.1 L628.2 6.5 L622.1 -0.2 L616.0 -6.8 L609.9 -13.4 L603.8 -20.1 L597.8 -26.7 L418.1 125.9Z"/>
<path fill="#47380b" d="M420.1 124.6 L416.9 139.8 L419.3 149.7 L422.7 158.7 L426.8 167.2 L431.1 175.3 L435.8 183.2 L440.8 190.9 L445.9 198.3 L451.2 205.6 L456.6 212.8 L462.2 219.8 L467.9 226.8 L473.8 233.5 L479.8 240.2 L485.9 246.8 L492.2 253.2 L498.6 259.5 L505.1 265.7 L511.8 271.7 L518.6 277.6 L525.6 283.4 L532.8 288.9 L540.2 294.3 L548.0 299.4 L556.1 304.1 L564.7 308.3 L574.4 311.6 L589.8 309.6 L589.8 309.6 L755.6 145.4 L749.5 138.8 L743.5 132.2 L737.4 125.6 L731.4 119.0 L725.3 112.4 L719.2 105.8 L713.2 99.1 L707.1 92.5 L701.1 85.9 L695.0 79.3 L688.9 72.7 L682.9 66.1 L676.8 59.5 L670.8 52.9 L664.7 46.3 L658.6 39.7 L652.6 33.1 L646.5 26.5 L640.5 19.9 L634.4 13.2 L628.3 6.6 L622.3 0.0 L616.2 -6.6 L610.2 -13.2 L604.1 -19.8 L598.0 -26.4 L420.1 124.6Z"/>
<path fill="#4b3c0c" d="M422.2 123.3 L419.0 138.5 L421.4 148.3 L424.8 157.3 L428.8 165.8 L433.2 173.9 L437.9 181.7 L442.8 189.3 L447.9 196.8 L453.1 204.1 L458.6 211.2 L464.1 218.2 L469.9 225.1 L475.7 231.9 L481.7 238.5 L487.8 245.0 L494.0 251.4 L500.4 257.7 L506.9 263.9 L513.5 269.9 L520.3 275.8 L527.3 281.5 L534.5 287.0 L541.9 292.4 L549.6 297.4 L557.7 302.1 L566.3 306.3 L575.9 309.6 L591.3 307.6 L591.3 307.6 L755.3 145.1 L749.3 138.5 L743.2 131.9 L737.2 125.3 L731.2 118.7 L725.1 112.2 L719.1 105.6 L713.0 99.0 L707.0 92.4 L701.0 85.8 L694.9 79.2 L688.9 72.7 L682.9 66.1 L676.8 59.5 L670.8 52.9 L664.7 46.3 L658.7 39.8 L652.7 33.2 L646.6 26.6 L640.6 20.0 L634.6 13.4 L628.5 6.8 L622.5 0.3 L616.4 -6.3 L610.4 -12.9 L604.4 -19.5 L598.3 -26.1 L422.2 123.3Z"/>
<path fill="#503f0d" d="M424.4 122.1 L421.2 137.1 L423.6 147.0 L427.0 155.9 L431.0 164.3 L435.4 172.4 L440.0 180.2 L444.9 187.8 L450.0 195.2 L455.2 202.4 L460.6 209.5 L466.2 216.5 L471.8 223.4 L477.7 230.1 L483.6 236.7 L489.7 243.2 L495.9 249.6 L502.2 255.8 L508.7 262.0 L515.3 268.0 L522.1 273.8 L529.0 279.5 L536.2 285.0 L543.6 290.3 L551.2 295.4 L559.3 300.1 L567.9 304.2 L577.5 307.5 L592.7 305.5 L592.7 305.5 L755.0 144.7 L748.9 138.1 L742.9 131.6 L736.9 125.0 L730.9 118.5 L724.9 111.9 L718.9 105.4 L712.9 98.8 L706.9 92.3 L700.9 85.7 L694.9 79.2 L688.8 72.6 L682.8 66.1 L676.8 59.5 L670.8 52.9 L664.8 46.4 L658.8 39.8 L652.8 33.3 L646.8 26.7 L640.8 20.2 L634.7 13.6 L628.7 7.1 L622.7 0.5 L616.7 -6.0 L610.7 -12.6 L604.7 -19.1 L598.7 -25.7 L424.4 122.1Z"/>
<path fill="#54430e" d="M426.8 120.8 L423.5 135.8 L425.9 145.6 L429.3 154.4 L433.3 162.8 L437.6 170.8 L442.2 178.6 L447.1 186.2 L452.1 193.5 L457.4 200.8 L462.7 207.8 L468.3 214.8 L473.9 221.6 L479.7 228.3 L485.6 234.9 L491.7 241.3 L497.8 247.7 L504.1 253.9 L510.6 260.0 L517.2 266.0 L523.9 271.8 L530.8 277.5 L537.9 282.9 L545.3 288.2 L552.9 293.2 L560.9 297.9 L569.4 302.1 L579.0 305.3 L594.2 303.4 L594.2 303.4 L754.6 144.3 L748.6 137.7 L742.6 131.2 L736.6 124.7 L730.6 118.2 L724.7 111.7 L718.7 105.1 L712.7 98.6 L706.7 92.1 L700.7 85.6 L694.8 79.1 L688.8 72.5 L682.8 66.0 L676.8 59.5 L670.8 53.0 L664.9 46.5 L658.9 39.9 L652.9 33.4 L646.9 26.9 L640.9 20.4 L635.0 13.9 L629.0 7.3 L623.0 0.8 L617.0 -5.7 L611.0 -12.2 L605.1 -18.7 L599.1 -25.3 L426.8 120.8Z"/>
<path fill="#57460e" d="M429.2 119.5 L426.0 134.4 L428.3 144.2 L431.7 153.0 L435.7 161.3 L440.0 169.3 L444.6 177.0 L449.4 184.5 L454.4 191.9 L459.6 199.0 L465.0 206.1 L470.4 213.0 L476.1 219.8 L481.8 226.4 L487.7 233.0 L493.7 239.4 L499.9 245.7 L506.1 251.9 L512.5 257.9 L519.1 263.9 L525.8 269.7 L532.6 275.3 L539.7 280.7 L547.0 286.0 L554.6 291.0 L562.5 295.6 L571.1 299.8 L580.6 303.0 L595.7 301.0 L595.7 301.0 L754.1 143.8 L748.2 137.3 L742.2 130.8 L736.3 124.3 L730.3 117.8 L724.4 111.4 L718.4 104.9 L712.5 98.4 L706.5 91.9 L700.6 85.4 L694.7 78.9 L688.7 72.5 L682.8 66.0 L676.8 59.5 L670.9 53.0 L664.9 46.5 L659.0 40.0 L653.0 33.6 L647.1 27.1 L641.1 20.6 L635.2 14.1 L629.2 7.6 L623.3 1.2 L617.4 -5.3 L611.4 -11.8 L605.5 -18.3 L599.5 -24.8 L429.2 119.5Z"/>
<path fill="#5b480f" d="M431.7 118.3 L428.5 133.1 L430.9 142.8 L434.3 151.5 L438.2 159.8 L442.5 167.7 L447.0 175.4 L451.8 182.9 L456.8 190.2 L462.0 197.3 L467.3 204.3 L472.7 211.1 L478.3 217.9 L484.0 224.5 L489.9 231.0 L495.8 237.4 L501.9 243.6 L508.2 249.8 L514.5 255.8 L521.0 261.7 L527.7 267.4 L534.5 273.0 L541.5 278.5 L548.8 283.7 L556.3 288.6 L564.2 293.2 L572.7 297.3 L582.1 300.5 L597.1 298.6 L597.1 298.6 L753.6 143.2 L747.7 136.8 L741.8 130.3 L735.9 123.9 L730.0 117.5 L724.1 111.0 L718.2 104.6 L712.3 98.1 L706.4 91.7 L700.4 85.3 L694.5 78.8 L688.6 72.4 L682.7 65.9 L676.8 59.5 L670.9 53.1 L665.0 46.6 L659.1 40.2 L653.2 33.7 L647.3 27.3 L641.4 20.9 L635.5 14.4 L629.6 8.0 L623.7 1.5 L617.7 -4.9 L611.8 -11.3 L605.9 -17.8 L600.0 -24.2 L431.7 118.3Z"/>
<path fill="#5e4b0f" d="M434.4 117.1 L431.2 131.7 L433.6 141.4 L436.9 150.1 L440.8 158.3 L445.0 166.1 L449.6 173.8 L454.3 181.2 L459.3 188.4 L464.4 195.5 L469.7 202.4 L475.1 209.2 L480.6 215.9 L486.3 222.5 L492.1 228.9 L498.0 235.3 L504.1 241.5 L510.3 247.6 L516.6 253.6 L523.0 259.4 L529.6 265.1 L536.4 270.7 L543.4 276.1 L550.6 281.2 L558.1 286.1 L565.9 290.7 L574.3 294.8 L583.7 298.0 L598.6 296.1 L598.6 296.1 L753.1 142.6 L747.2 136.2 L741.3 129.8 L735.5 123.4 L729.6 117.0 L723.7 110.6 L717.9 104.3 L712.0 97.9 L706.1 91.5 L700.3 85.1 L694.4 78.7 L688.5 72.3 L682.7 65.9 L676.8 59.5 L671.0 53.1 L665.1 46.7 L659.2 40.3 L653.4 33.9 L647.5 27.5 L641.6 21.1 L635.8 14.7 L629.9 8.3 L624.0 2.0 L618.2 -4.4 L612.3 -10.8 L606.4 -17.2 L600.6 -23.6 L434.4 117.1Z"/>
<path fill="#624e10" d="M437.2 115.9 L434.0 130.4 L436.3 140.0 L439.7 148.6 L443.5 156.7 L447.7 164.5 L452.2 172.1 L456.9 179.4 L461.8 186.6 L466.9 193.6 L472.2 200.5 L477.5 207.3 L483.0 213.9 L488.7 220.4 L494.4 226.8 L500.3 233.1 L506.3 239.3 L512.4 245.3 L518.7 251.2 L525.1 257.1 L531.6 262.7 L538.4 268.2 L545.3 273.6 L552.4 278.7 L559.8 283.6 L567.6 288.1 L575.9 292.1 L585.2 295.3 L600.0 293.4 L600.0 293.4 L752.4 141.9 L746.6 135.6 L740.8 129.2 L735.0 122.9 L729.2 116.6 L723.3 110.2 L717.5 103.9 L711.7 97.5 L705.9 91.2 L700.1 84.9 L694.3 78.5 L688.5 72.2 L682.6 65.8 L676.8 59.5 L671.0 53.2 L665.2 46.8 L659.4 40.5 L653.6 34.1 L647.7 27.8 L641.9 21.5 L636.1 15.1 L630.3 8.8 L624.5 2.4 L618.7 -3.9 L612.8 -10.3 L607.0 -16.6 L601.2 -22.9 L437.2 115.9Z"/>
<path fill="#665110" d="M440.1 114.7 L436.9 129.1 L439.2 138.6 L442.5 147.1 L446.3 155.2 L450.5 162.9 L455.0 170.4 L459.7 177.7 L464.5 184.8 L469.6 191.8 L474.7 198.6 L480.1 205.3 L485.5 211.8 L491.1 218.3 L496.8 224.6 L502.6 230.9 L508.6 237.0 L514.6 243.0 L520.8 248.8 L527.2 254.6 L533.7 260.2 L540.3 265.7 L547.2 270.9 L554.3 276.0 L561.6 280.9 L569.3 285.4 L577.6 289.4 L586.8 292.5 L601.4 290.6 L601.4 290.6 L751.7 141.2 L746.0 134.9 L740.2 128.6 L734.4 122.3 L728.7 116.0 L722.9 109.8 L717.2 103.5 L711.4 97.2 L705.6 90.9 L699.9 84.6 L694.1 78.3 L688.3 72.1 L682.6 65.8 L676.8 59.5 L671.1 53.2 L665.3 46.9 L659.5 40.6 L653.8 34.4 L648.0 28.1 L642.2 21.8 L636.5 15.5 L630.7 9.2 L625.0 3.0 L619.2 -3.3 L613.4 -9.6 L607.7 -15.9 L601.9 -22.2 L440.1 114.7Z"/>
<path fill="#695411" d="M443.1 113.6 L440.0 127.9 L442.3 137.2 L445.5 145.7 L449.3 153.7 L453.5 161.3 L457.9 168.7 L462.5 175.9 L467.3 183.0 L472.3 189.9 L477.4 196.6 L482.7 203.2 L488.1 209.7 L493.6 216.1 L499.2 222.4 L505.0 228.5 L510.9 234.6 L516.9 240.5 L523.0 246.3 L529.3 252.0 L535.8 257.6 L542.3 263.0 L549.1 268.2 L556.1 273.3 L563.4 278.0 L571.0 282.5 L579.2 286.5 L588.3 289.5 L602.8 287.7 L602.8 287.7 L751.0 140.3 L745.3 134.1 L739.6 127.9 L733.9 121.7 L728.2 115.5 L722.4 109.2 L716.7 103.0 L711.0 96.8 L705.3 90.6 L699.6 84.4 L693.9 78.2 L688.2 71.9 L682.5 65.7 L676.8 59.5 L671.1 53.3 L665.4 47.1 L659.7 40.8 L654.0 34.6 L648.3 28.4 L642.6 22.2 L636.9 16.0 L631.2 9.7 L625.5 3.5 L619.8 -2.7 L614.1 -8.9 L608.4 -15.1 L602.7 -21.3 L443.1 113.6Z"/>
<path fill="#6c5611" d="M446.3 112.5 L443.2 126.6 L445.5 135.9 L448.7 144.2 L452.4 152.1 L456.5 159.7 L460.9 167.0 L465.4 174.1 L470.2 181.1 L475.1 187.9 L480.2 194.6 L485.4 201.1 L490.7 207.5 L496.2 213.9 L501.8 220.1 L507.5 226.2 L513.3 232.1 L519.2 238.0 L525.3 243.8 L531.5 249.4 L537.9 254.9 L544.4 260.2 L551.1 265.4 L558.0 270.4 L565.2 275.1 L572.7 279.5 L580.8 283.4 L589.8 286.5 L604.1 284.6 L604.1 284.6 L750.1 139.4 L744.5 133.3 L738.8 127.1 L733.2 121.0 L727.6 114.8 L721.9 108.7 L716.3 102.5 L710.7 96.4 L705.0 90.2 L699.4 84.1 L693.7 77.9 L688.1 71.8 L682.5 65.6 L676.8 59.5 L671.2 53.3 L665.5 47.2 L659.9 41.1 L654.3 34.9 L648.6 28.8 L643.0 22.6 L637.3 16.5 L631.7 10.3 L626.1 4.2 L620.4 -2.0 L614.8 -8.1 L609.2 -14.3 L603.5 -20.4 L446.3 112.5Z"/>
<path fill="#6e5812" d="M449.6 111.5 L446.5 125.4 L448.8 134.6 L452.0 142.8 L455.6 150.6 L459.7 158.1 L464.0 165.3 L468.5 172.3 L473.2 179.2 L478.1 185.9 L483.1 192.5 L488.2 199.0 L493.5 205.3 L498.9 211.6 L504.4 217.7 L510.0 223.7 L515.7 229.6 L521.6 235.4 L527.6 241.1 L533.7 246.6 L540.0 252.0 L546.4 257.3 L553.1 262.4 L559.9 267.3 L567.0 272.0 L574.4 276.3 L582.4 280.2 L591.3 283.2 L605.4 281.4 L605.4 281.4 L749.2 138.4 L743.6 132.3 L738.1 126.3 L732.5 120.2 L726.9 114.1 L721.4 108.1 L715.8 102.0 L710.2 95.9 L704.7 89.8 L699.1 83.8 L693.5 77.7 L688.0 71.6 L682.4 65.6 L676.8 59.5 L671.3 53.4 L665.7 47.4 L660.1 41.3 L654.6 35.2 L649.0 29.1 L643.4 23.1 L637.8 17.0 L632.3 10.9 L626.7 4.9 L621.1 -1.2 L615.6 -7.3 L610.0 -13.3 L604.4 -19.4 L449.6 111.5Z"/>
<path fill="#715a12" d="M453.0 110.5 L450.0 124.3 L452.2 133.3 L455.4 141.4 L459.0 149.1 L463.0 156.5 L467.2 163.6 L471.7 170.5 L476.3 177.3 L481.1 183.9 L486.0 190.4 L491.1 196.8 L496.3 203.0 L501.6 209.2 L507.0 215.2 L512.6 221.2 L518.3 227.0 L524.0 232.7 L529.9 238.3 L536.0 243.8 L542.2 249.1 L548.5 254.3 L555.0 259.3 L561.8 264.2 L568.8 268.8 L576.1 273.1 L584.0 276.9 L592.7 279.9 L606.7 278.1 L606.7 278.1 L748.2 137.3 L742.7 131.3 L737.2 125.3 L731.7 119.3 L726.2 113.4 L720.7 107.4 L715.2 101.4 L709.8 95.4 L704.3 89.4 L698.8 83.4 L693.3 77.4 L687.8 71.5 L682.3 65.5 L676.8 59.5 L671.3 53.5 L665.8 47.5 L660.4 41.5 L654.9 35.6 L649.4 29.6 L643.9 23.6 L638.4 17.6 L632.9 11.6 L627.4 5.6 L621.9 -0.3 L616.4 -6.3 L611.0 -12.3 L605.5 -18.3 L453.0 110.5Z"/>
<path fill="#735c13" d="M456.6 109.6 L453.7 123.2 L455.9 132.0 L458.9 140.1 L462.5 147.6 L466.4 154.9 L470.6 161.9 L475.0 168.7 L479.5 175.4 L484.3 181.9 L489.1 188.3 L494.1 194.6 L499.2 200.7 L504.4 206.8 L509.8 212.7 L515.3 218.5 L520.8 224.3 L526.5 229.9 L532.3 235.4 L538.3 240.8 L544.4 246.1 L550.6 251.2 L557.0 256.1 L563.7 260.9 L570.6 265.4 L577.8 269.6 L585.5 273.4 L594.1 276.3 L607.9 274.6 L607.9 274.6 L747.0 136.1 L741.6 130.2 L736.2 124.3 L730.8 118.4 L725.4 112.5 L720.0 106.6 L714.6 100.7 L709.2 94.8 L703.8 88.9 L698.4 83.1 L693.0 77.2 L687.6 71.3 L682.2 65.4 L676.8 59.5 L671.4 53.6 L666.0 47.7 L660.6 41.8 L655.2 35.9 L649.8 30.0 L644.4 24.2 L639.0 18.3 L633.6 12.4 L628.2 6.5 L622.8 0.6 L617.4 -5.3 L612.0 -11.2 L606.6 -17.1 L456.6 109.6Z"/>
<path fill="#755d13" d="M460.4 108.9 L457.5 122.1 L459.6 130.8 L462.6 138.7 L466.2 146.2 L470.0 153.3 L474.1 160.2 L478.4 166.9 L482.9 173.4 L487.5 179.8 L492.3 186.1 L497.2 192.3 L502.2 198.3 L507.4 204.3 L512.6 210.1 L518.0 215.8 L523.5 221.5 L529.1 227.0 L534.8 232.4 L540.6 237.7 L546.6 242.9 L552.7 247.9 L559.0 252.8 L565.6 257.5 L572.3 261.9 L579.4 266.0 L587.0 269.7 L595.5 272.6 L609.0 270.9 L609.0 270.9 L745.8 134.7 L740.5 128.9 L735.2 123.2 L729.9 117.4 L724.6 111.6 L719.3 105.8 L714.0 100.0 L708.7 94.2 L703.4 88.4 L698.1 82.6 L692.7 76.9 L687.4 71.1 L682.1 65.3 L676.8 59.5 L671.5 53.7 L666.2 47.9 L660.9 42.1 L655.6 36.3 L650.3 30.6 L645.0 24.8 L639.7 19.0 L634.4 13.2 L629.0 7.4 L623.7 1.6 L618.4 -4.2 L613.1 -9.9 L607.8 -15.7 L460.4 108.9Z"/>
<path fill="#765e13" d="M464.3 108.2 L461.5 121.2 L463.6 129.7 L466.5 137.4 L470.0 144.7 L473.8 151.7 L477.8 158.5 L482.0 165.1 L486.4 171.5 L490.9 177.8 L495.6 183.9 L500.4 189.9 L505.3 195.9 L510.4 201.7 L515.5 207.4 L520.8 213.1 L526.2 218.6 L531.7 224.0 L537.3 229.3 L543.0 234.5 L548.8 239.6 L554.9 244.5 L561.1 249.3 L567.4 253.9 L574.1 258.2 L581.0 262.3 L588.5 265.9 L596.8 268.7 L610.0 267.0 L610.0 267.0 L744.5 133.3 L739.3 127.6 L734.1 121.9 L728.9 116.2 L723.7 110.6 L718.5 104.9 L713.3 99.2 L708.0 93.5 L702.8 87.9 L697.6 82.2 L692.4 76.5 L687.2 70.8 L682.0 65.2 L676.8 59.5 L671.6 53.8 L666.4 48.1 L661.2 42.5 L656.0 36.8 L650.8 31.1 L645.6 25.5 L640.4 19.8 L635.2 14.1 L630.0 8.4 L624.8 2.8 L619.6 -2.9 L614.4 -8.6 L609.2 -14.3 L464.3 108.2Z"/>
<path fill="#785f13" d="M468.4 107.6 L465.6 120.3 L467.7 128.7 L470.6 136.2 L474.0 143.3 L477.7 150.2 L481.6 156.8 L485.7 163.2 L490.0 169.5 L494.5 175.6 L499.0 181.7 L503.7 187.6 L508.6 193.4 L513.5 199.1 L518.5 204.7 L523.7 210.2 L528.9 215.6 L534.3 220.9 L539.8 226.1 L545.4 231.2 L551.1 236.1 L557.0 240.9 L563.1 245.6 L569.3 250.1 L575.8 254.4 L582.6 258.3 L589.9 261.9 L598.0 264.6 L611.0 263.0 L611.0 263.0 L743.0 131.7 L737.9 126.1 L732.8 120.6 L727.7 115.0 L722.6 109.5 L717.6 103.9 L712.5 98.4 L707.4 92.8 L702.3 87.3 L697.2 81.7 L692.1 76.2 L687.0 70.6 L681.9 65.0 L676.8 59.5 L671.7 53.9 L666.6 48.4 L661.5 42.8 L656.5 37.3 L651.4 31.7 L646.3 26.2 L641.2 20.6 L636.1 15.1 L631.0 9.5 L625.9 4.0 L620.8 -1.6 L615.7 -7.1 L610.6 -12.7 L468.4 107.6Z"/>
<path fill="#796013" d="M472.7 107.1 L470.0 119.5 L472.0 127.7 L474.8 135.1 L478.1 142.0 L481.7 148.7 L485.6 155.1 L489.6 161.4 L493.8 167.5 L498.1 173.5 L502.6 179.4 L507.2 185.2 L511.9 190.8 L516.7 196.4 L521.6 201.9 L526.6 207.2 L531.8 212.5 L537.0 217.7 L542.3 222.7 L547.8 227.7 L553.4 232.5 L559.2 237.2 L565.1 241.8 L571.2 246.2 L577.5 250.3 L584.1 254.2 L591.2 257.7 L599.2 260.4 L611.8 258.7 L611.8 258.7 L741.4 129.9 L736.4 124.5 L731.5 119.1 L726.5 113.7 L721.5 108.2 L716.6 102.8 L711.6 97.4 L706.6 92.0 L701.7 86.6 L696.7 81.2 L691.7 75.7 L686.8 70.3 L681.8 64.9 L676.8 59.5 L671.9 54.1 L666.9 48.7 L661.9 43.2 L656.9 37.8 L652.0 32.4 L647.0 27.0 L642.0 21.6 L637.1 16.2 L632.1 10.8 L627.1 5.3 L622.2 -0.1 L617.2 -5.5 L612.2 -10.9 L472.7 107.1Z"/>
<path fill="#7a6114" d="M477.2 106.8 L474.6 118.9 L476.5 126.8 L479.3 134.0 L482.5 140.7 L486.0 147.2 L489.7 153.5 L493.6 159.6 L497.7 165.6 L501.9 171.4 L506.3 177.1 L510.8 182.7 L515.3 188.2 L520.0 193.6 L524.8 198.9 L529.7 204.2 L534.7 209.3 L539.7 214.3 L545.0 219.3 L550.3 224.1 L555.7 228.8 L561.3 233.4 L567.0 237.8 L573.0 242.1 L579.1 246.1 L585.6 249.9 L592.5 253.2 L600.2 255.9 L612.5 254.3 L612.5 254.3 L739.6 128.0 L734.8 122.7 L730.0 117.5 L725.1 112.2 L720.3 106.9 L715.5 101.6 L710.6 96.4 L705.8 91.1 L701.0 85.8 L696.1 80.6 L691.3 75.3 L686.5 70.0 L681.7 64.8 L676.8 59.5 L672.0 54.2 L667.2 49.0 L662.3 43.7 L657.5 38.4 L652.7 33.2 L647.8 27.9 L643.0 22.6 L638.2 17.3 L633.3 12.1 L628.5 6.8 L623.7 1.5 L618.8 -3.7 L614.0 -9.0 L477.2 106.8Z"/>
<path fill="#7a6114" d="M481.9 106.6 L479.4 118.3 L481.3 126.0 L483.9 133.0 L487.1 139.5 L490.4 145.8 L494.1 151.9 L497.9 157.8 L501.8 163.6 L505.9 169.2 L510.1 174.8 L514.5 180.2 L518.9 185.6 L523.4 190.8 L528.1 196.0 L532.8 201.0 L537.6 206.0 L542.6 210.9 L547.6 215.6 L552.8 220.3 L558.0 224.9 L563.5 229.3 L569.0 233.6 L574.8 237.7 L580.7 241.7 L587.0 245.3 L593.7 248.6 L601.2 251.1 L613.1 249.6 L613.1 249.6 L737.7 125.9 L733.0 120.8 L728.3 115.7 L723.7 110.6 L719.0 105.5 L714.3 100.4 L709.6 95.2 L704.9 90.1 L700.2 85.0 L695.6 79.9 L690.9 74.8 L686.2 69.7 L681.5 64.6 L676.8 59.5 L672.1 54.4 L667.5 49.3 L662.8 44.2 L658.1 39.1 L653.4 34.0 L648.7 28.9 L644.0 23.7 L639.3 18.6 L634.7 13.5 L630.0 8.4 L625.3 3.3 L620.6 -1.8 L615.9 -6.9 L481.9 106.6Z"/>
<path fill="#7b6214" d="M486.9 106.6 L484.5 117.9 L486.3 125.4 L488.9 132.1 L491.8 138.4 L495.1 144.5 L498.6 150.3 L502.3 156.0 L506.1 161.6 L510.1 167.1 L514.1 172.4 L518.3 177.7 L522.6 182.8 L526.9 187.9 L531.4 192.9 L536.0 197.7 L540.7 202.5 L545.4 207.2 L550.3 211.9 L555.3 216.4 L560.4 220.8 L565.6 225.1 L571.0 229.2 L576.5 233.2 L582.3 237.0 L588.3 240.5 L594.8 243.7 L602.0 246.1 L613.5 244.6 L613.5 244.6 L735.6 123.6 L731.1 118.6 L726.6 113.7 L722.0 108.8 L717.5 103.9 L713.0 98.9 L708.5 94.0 L703.9 89.1 L699.4 84.1 L694.9 79.2 L690.4 74.3 L685.9 69.4 L681.3 64.4 L676.8 59.5 L672.3 54.6 L667.8 49.6 L663.3 44.7 L658.7 39.8 L654.2 34.9 L649.7 29.9 L645.2 25.0 L640.6 20.1 L636.1 15.1 L631.6 10.2 L627.1 5.3 L622.6 0.3 L618.0 -4.6 L486.9 106.6Z"/>
<path fill="#7b6214" d="M492.2 106.8 L489.8 117.7 L491.5 124.8 L494.0 131.3 L496.9 137.4 L500.0 143.2 L503.4 148.8 L506.9 154.3 L510.6 159.7 L514.4 164.9 L518.3 170.0 L522.3 175.1 L526.4 180.0 L530.6 184.9 L534.9 189.7 L539.3 194.4 L543.8 199.0 L548.3 203.5 L553.0 207.9 L557.8 212.2 L562.7 216.5 L567.7 220.6 L572.9 224.6 L578.2 228.4 L583.7 232.0 L589.5 235.4 L595.8 238.4 L602.7 240.8 L613.7 239.4 L613.7 239.4 L733.3 121.0 L728.9 116.3 L724.6 111.6 L720.2 106.8 L715.9 102.1 L711.6 97.4 L707.2 92.6 L702.9 87.9 L698.5 83.2 L694.2 78.4 L689.8 73.7 L685.5 69.0 L681.2 64.2 L676.8 59.5 L672.5 54.8 L668.1 50.0 L663.8 45.3 L659.5 40.6 L655.1 35.8 L650.8 31.1 L646.4 26.4 L642.1 21.6 L637.7 16.9 L633.4 12.2 L629.1 7.4 L624.7 2.7 L620.4 -2.0 L492.2 106.8Z"/>
<path fill="#7c6314" d="M497.7 107.3 L495.5 117.7 L497.1 124.5 L499.5 130.7 L502.2 136.5 L505.2 142.0 L508.4 147.4 L511.8 152.6 L515.3 157.7 L518.9 162.7 L522.6 167.6 L526.5 172.5 L530.4 177.2 L534.4 181.8 L538.5 186.4 L542.7 190.9 L547.0 195.2 L551.3 199.6 L555.8 203.8 L560.3 207.9 L565.0 212.0 L569.8 215.9 L574.7 219.7 L579.8 223.3 L585.1 226.8 L590.6 230.0 L596.6 232.9 L603.2 235.2 L613.7 233.8 L613.7 233.8 L730.7 118.2 L726.5 113.7 L722.4 109.2 L718.3 104.7 L714.1 100.2 L710.0 95.6 L705.8 91.1 L701.7 86.6 L697.5 82.1 L693.4 77.6 L689.2 73.0 L685.1 68.5 L681.0 64.0 L676.8 59.5 L672.7 55.0 L668.5 50.5 L664.4 45.9 L660.2 41.4 L656.1 36.9 L652.0 32.4 L647.8 27.9 L643.7 23.4 L639.5 18.8 L635.4 14.3 L631.2 9.8 L627.1 5.3 L623.0 0.8 L497.7 107.3Z"/>
<path fill="#7c6314" d="M503.6 108.1 L501.5 118.0 L503.1 124.4 L505.3 130.2 L507.9 135.7 L510.7 141.0 L513.8 146.1 L516.9 151.0 L520.3 155.9 L523.7 160.6 L527.2 165.2 L530.8 169.8 L534.5 174.2 L538.3 178.6 L542.2 183.0 L546.2 187.2 L550.2 191.4 L554.4 195.4 L558.6 199.4 L562.9 203.4 L567.3 207.2 L571.9 210.9 L576.5 214.5 L581.3 217.9 L586.3 221.2 L591.6 224.3 L597.2 227.0 L603.5 229.1 L613.4 227.9 L613.4 227.9 L727.8 115.1 L723.9 110.8 L720.0 106.5 L716.0 102.3 L712.1 98.0 L708.2 93.7 L704.3 89.4 L700.4 85.2 L696.4 80.9 L692.5 76.6 L688.6 72.3 L684.7 68.1 L680.7 63.8 L676.8 59.5 L672.9 55.2 L669.0 50.9 L665.1 46.7 L661.1 42.4 L657.2 38.1 L653.3 33.8 L649.4 29.6 L645.4 25.3 L641.5 21.0 L637.6 16.7 L633.7 12.5 L629.7 8.2 L625.8 3.9 L503.6 108.1Z"/>
<path fill="#7d6314" d="M509.9 109.3 L507.9 118.5 L509.4 124.5 L511.5 130.0 L513.9 135.1 L516.6 140.1 L519.4 144.8 L522.4 149.5 L525.5 154.0 L528.7 158.4 L532.0 162.8 L535.4 167.1 L538.9 171.2 L542.5 175.4 L546.1 179.4 L549.8 183.4 L553.6 187.3 L557.5 191.1 L561.4 194.8 L565.5 198.5 L569.6 202.1 L573.9 205.6 L578.2 208.9 L582.7 212.2 L587.4 215.3 L592.3 218.1 L597.6 220.7 L603.5 222.7 L612.8 221.5 L612.8 221.5 L614.8 212.3 L720.9 107.6 L717.2 103.6 L713.6 99.6 L709.9 95.6 L706.2 91.6 L702.5 87.5 L698.9 83.5 L695.2 79.5 L691.5 75.5 L687.8 71.5 L684.2 67.5 L680.5 63.5 L676.8 59.5 L673.1 55.5 L669.5 51.5 L665.8 47.5 L662.1 43.5 L658.4 39.5 L654.8 35.5 L651.1 31.5 L647.4 27.4 L643.7 23.4 L640.1 19.4 L636.4 15.4 L632.7 11.4 L519.3 108.1 L509.9 109.3Z"/>
<path fill="#7d6314" d="M516.7 110.9 L514.9 119.4 L516.3 125.0 L518.2 130.0 L520.4 134.8 L522.9 139.3 L525.5 143.8 L528.3 148.0 L531.1 152.2 L534.1 156.3 L537.2 160.3 L540.3 164.3 L543.5 168.1 L546.8 172.0 L550.1 175.7 L553.6 179.4 L557.1 183.0 L560.7 186.5 L564.3 189.9 L568.1 193.3 L571.9 196.6 L575.8 199.9 L579.8 203.0 L584.0 206.0 L588.3 208.8 L592.9 211.5 L597.7 213.8 L603.2 215.7 L611.8 214.6 L611.8 214.6 L613.6 206.1 L717.6 103.9 L714.2 100.2 L710.8 96.5 L707.4 92.8 L704.0 89.1 L700.6 85.4 L697.2 81.7 L693.8 78.0 L690.4 74.3 L687.0 70.6 L683.6 66.9 L680.2 63.2 L676.8 59.5 L673.4 55.8 L670.0 52.1 L666.6 48.4 L663.2 44.7 L659.8 41.0 L656.4 37.3 L653.1 33.6 L649.7 29.9 L646.3 26.2 L642.9 22.5 L639.5 18.8 L636.1 15.1 L525.4 109.8 L516.7 110.9Z"/>
<path fill="#7d6414" d="M524.2 113.2 L522.5 120.9 L523.7 125.9 L525.5 130.5 L527.5 134.8 L529.7 138.9 L532.1 142.9 L534.6 146.8 L537.2 150.5 L539.9 154.3 L542.7 157.9 L545.5 161.5 L548.4 165.0 L551.4 168.4 L554.4 171.8 L557.5 175.1 L560.7 178.4 L563.9 181.6 L567.2 184.7 L570.6 187.7 L574.1 190.7 L577.6 193.7 L581.3 196.5 L585.0 199.2 L589.0 201.8 L593.1 204.2 L597.5 206.3 L602.4 208.0 L610.2 207.0 L610.2 207.0 L611.9 199.3 L713.7 99.7 L710.6 96.3 L707.5 93.0 L704.5 89.6 L701.4 86.3 L698.3 82.9 L695.3 79.6 L692.2 76.2 L689.1 72.9 L686.0 69.5 L683.0 66.2 L679.9 62.8 L676.8 59.5 L673.7 56.1 L670.7 52.8 L667.6 49.4 L664.5 46.1 L661.5 42.7 L658.4 39.4 L655.3 36.1 L652.2 32.7 L649.2 29.4 L646.1 26.0 L643.0 22.7 L640.0 19.3 L532.0 112.2 L524.2 113.2Z"/>
<path fill="#7d6414" d="M532.5 116.3 L531.0 123.0 L532.1 127.4 L533.6 131.4 L535.4 135.2 L537.3 138.8 L539.4 142.3 L541.6 145.7 L543.9 149.0 L546.2 152.3 L548.6 155.4 L551.1 158.6 L553.7 161.6 L556.3 164.6 L559.0 167.6 L561.7 170.5 L564.4 173.4 L567.3 176.2 L570.2 178.9 L573.1 181.6 L576.2 184.2 L579.3 186.8 L582.5 189.2 L585.8 191.6 L589.2 193.9 L592.8 196.0 L596.7 197.9 L601.0 199.3 L607.8 198.4 L607.8 198.4 L609.3 191.7 L608.2 187.3 L706.4 91.8 L703.7 88.8 L701.0 85.9 L698.4 83.0 L695.7 80.0 L693.0 77.1 L690.3 74.2 L687.6 71.2 L684.9 68.3 L682.2 65.4 L679.5 62.4 L676.8 59.5 L674.1 56.6 L671.4 53.6 L668.7 50.7 L666.1 47.8 L663.4 44.8 L660.7 41.9 L658.0 39.0 L655.3 36.0 L652.6 33.1 L649.9 30.1 L647.2 27.2 L543.6 116.8 L539.3 115.4 L532.5 116.3Z"/>
<path fill="#7e6414" d="M542.0 120.7 L540.8 126.2 L541.7 129.9 L543.0 133.2 L544.4 136.3 L546.0 139.3 L547.8 142.2 L549.6 145.0 L551.4 147.7 L553.4 150.4 L555.4 153.0 L557.4 155.6 L559.5 158.1 L561.7 160.6 L563.9 163.1 L566.1 165.5 L568.4 167.8 L570.8 170.2 L573.2 172.4 L575.6 174.6 L578.1 176.8 L580.7 178.9 L583.3 181.0 L586.1 182.9 L588.9 184.8 L591.9 186.5 L595.1 188.1 L598.6 189.3 L604.3 188.5 L604.3 188.5 L605.5 183.0 L604.6 179.3 L603.3 176.0 L601.8 172.9 L696.8 81.3 L694.6 78.9 L692.4 76.5 L690.2 74.0 L687.9 71.6 L685.7 69.2 L683.5 66.8 L681.3 64.3 L679.0 61.9 L676.8 59.5 L674.6 57.1 L672.4 54.6 L670.1 52.2 L667.9 49.8 L665.7 47.4 L663.5 45.0 L661.3 42.5 L659.0 40.1 L656.8 37.7 L557.4 124.4 L554.4 122.7 L551.2 121.1 L547.7 119.9 L542.0 120.7Z"/>
<path fill="#7e6414" d="M553.9 127.5 L553.0 131.5 L553.7 134.1 L554.6 136.5 L555.6 138.7 L556.8 140.9 L558.0 142.9 L559.3 144.9 L560.6 146.9 L562.0 148.8 L563.5 150.7 L564.9 152.5 L566.4 154.4 L568.0 156.1 L569.6 157.9 L571.2 159.6 L572.8 161.3 L574.5 162.9 L576.2 164.6 L577.9 166.2 L579.7 167.7 L581.6 169.2 L583.5 170.7 L585.4 172.1 L587.4 173.4 L589.6 174.6 L591.8 175.8 L594.4 176.6 L598.4 176.1 L598.4 176.1 L599.3 172.1 L598.7 169.5 L597.7 167.1 L596.7 164.9 L595.5 162.8 L594.3 160.7 L593.0 158.7 L591.7 156.7 L590.3 154.8 L588.9 152.9 L587.4 151.1 L585.9 149.3 L584.3 147.5 L582.8 145.8 L581.2 144.0 L579.5 142.4 L577.8 140.7 L576.1 139.1 L574.4 137.5 L572.6 135.9 L570.8 134.4 L568.9 133.0 L566.9 131.6 L564.9 130.2 L562.8 129.0 L560.5 127.9 L557.9 127.0 L553.9 127.5Z"/>
</g>
<rect x="374.0" y="88.0" width="263.0" height="263.0" fill="url(#s1h)"/>
</g>
</svg>
<!-- tools overlay (scene-local coords: y-118) -->
<div class="a" style="left:2px;top:2px;width:43px;height:147px;background:#b4b0a6;border-radius:3px;border:1px solid #a09a8c"></div>
<div class="a" style="left:16px;top:8px;width:16px;height:1px;background:#555"></div><div class="a" style="left:16px;top:11px;width:16px;height:1px;background:#555"></div>
<div class="a" style="left:5px;top:20px;width:37px;height:20px;background:#e2e2e2;border-radius:2px 2px 0 0"></div>
<div class="a" style="left:5px;top:41px;width:37px;height:20px;background:#8fb4ea"></div>
<div class="a" style="left:5px;top:62px;width:37px;height:20px;background:#e2e2e2"></div>
<div class="a" style="left:5px;top:83px;width:37px;height:20px;background:#e2e2e2"></div>
<div class="a" style="left:5px;top:104px;width:37px;height:20px;background:#e2e2e2"></div>
<div class="a" style="left:5px;top:125px;width:37px;height:20px;background:#e2e2e2;border-radius:0 0 2px 2px"></div>
<!-- hand -->
<svg style="left:15.5px;top:21.5px" width="17" height="17" viewBox="0 0 17 17"><path d="M5 9 V3.6 M7.4 8.4 V2 M9.8 8.4 V2.4 M12.2 9 V4" stroke="#444" stroke-width="1.9" stroke-linecap="round" fill="none"/><path d="M4 8 H13.2 V10.5 C13.2 13.6 11.4 15.6 8.8 15.6 C6.6 15.6 5.4 14.6 4.2 12.6 L1.6 8.6 C1.1 7.6 2.3 6.8 3.1 7.7 L4.6 9.6 Z" fill="#444"/></svg>
<!-- move -->
<svg style="left:16px;top:43px" width="16" height="16" viewBox="0 0 16 16"><path d="M8 1.2 V6 M8 10 V14.8 M1.2 8 H6 M10 8 H14.8" stroke="#fff" stroke-width="1.2" fill="none"/><path d="M5.8 3.4 L8 1.1 L10.2 3.4 M5.8 12.6 L8 14.9 L10.2 12.6 M3.4 5.8 L1.1 8 L3.4 10.2 M12.6 5.8 L14.9 8 L12.6 10.2" stroke="#fff" stroke-width="1.2" fill="none"/></svg>
<!-- rotate -->
<svg style="left:16px;top:64px" width="16" height="16" viewBox="0 0 16 16"><path d="M10.2 2.2 A6.2 6.2 0 0 0 4.2 12.8" fill="none" stroke="#444" stroke-width="1.1"/><path d="M5.8 13.8 A6.2 6.2 0 0 0 11.8 3.2" fill="none" stroke="#444" stroke-width="1.1"/><path d="M1.6 10.4 V13.2 H4.6" fill="none" stroke="#444" stroke-width="1.1"/><path d="M14.4 5.6 V2.8 H11.4" fill="none" stroke="#444" stroke-width="1.1"/></svg>
<!-- scale -->
<svg style="left:16px;top:85px" width="16" height="16" viewBox="0 0 16 16"><path d="M1.5 1.5 H14.5 V14.5 H1.5 Z" fill="none" stroke="#444" stroke-width="1.1"/><path d="M1.5 10.5 H5.5 V14.5" fill="none" stroke="#444" stroke-width="1.1"/><path d="M7 9 L12 4 M8.4 4 H12 V7.6" fill="none" stroke="#444" stroke-width="1.1"/></svg>
<!-- rect -->
<svg style="left:16px;top:106px" width="16" height="16" viewBox="0 0 16 16"><path d="M2.5 2.5 H13.5 V13.5 H2.5 Z" fill="none" stroke="#444" stroke-width="1.1" stroke-dasharray="3.2 2.2" stroke-dashoffset="-1.5"/><path d="M1 1 h3 v3 h-3 Z M12 1 h3 v3 h-3 Z M1 12 h3 v3 h-3 Z M12 12 h3 v3 h-3 Z" fill="#444"/></svg>
<!-- transform -->
<svg style="left:16px;top:127px" width="16" height="16" viewBox="0 0 16 16"><circle cx="8" cy="8" r="5.6" fill="none" stroke="#444" stroke-width="1"/><path d="M8 3.6 V12.4 M3.6 8 H12.4 M6.6 5 L8 3.4 L9.4 5 M6.6 11 L8 12.6 L9.4 11 M5 6.6 L3.4 8 L5 9.4 M11 6.6 L12.6 8 L11 9.4" fill="none" stroke="#444" stroke-width="1"/><path d="M0.5 3.5 V0.5 H3.5 M12.5 0.5 H15.5 V3.5 M15.5 12.5 V15.5 H12.5 M3.5 15.5 H0.5 V12.5" fill="none" stroke="#444" stroke-width="1"/></svg>
<!-- gizmo handle -->
<div class="a" style="left:842px;top:8px;width:16px;height:1px;background:#5e4c1c"></div><div class="a" style="left:842px;top:11px;width:16px;height:1px;background:#5e4c1c"></div>
<!-- gizmo -->
<svg style="left:860px;top:10px" width="80" height="75" viewBox="860 128 80 75">
<path d="M886.8 175.2 L867.8 179.2 L876.4 190.4 Z" fill="#cfcdc6"/><ellipse cx="872.1" cy="184.8" rx="7" ry="3.4" transform="rotate(53 872.1 184.8)" fill="#e4e3de"/>
<path d="M901.2 175.6 L920 180 L911 191 Z" fill="#bcbab3"/><ellipse cx="915.5" cy="185.5" rx="7" ry="3.4" transform="rotate(-51 915.5 185.5)" fill="#cbc9c3"/>
<path d="M890.8 178 L897.2 178 L898.4 185 L889.6 185 Z" fill="#dcdad4"/><circle cx="894" cy="185" r="4.4" fill="#ecebe6"/>
<path d="M894 160.5 L902.8 165.4 V175.6 L894 180.6 L885.2 175.6 V165.4 Z" fill="#d9d8d4"/><path d="M894 160.5 L902.8 165.4 L894 170.4 L885.2 165.4 Z" fill="#ecebe8"/><path d="M894 170.4 V180.6 L885.2 175.6 V165.4 Z" fill="#dcdbd7"/>
<path d="M885.2 145.5 L902.8 145.5 L894.6 163 L893.4 163 Z" fill="#7ccf4e"/><ellipse cx="894" cy="145.3" rx="8.9" ry="3.9" fill="#a6f070"/>
<path d="M887.5 163.8 L884.6 154.6 C881 152.4 876 155 876.5 159.4 C877 162.6 880 164.2 887.5 163.8 Z" fill="#3f6fe0"/><ellipse cx="879.6" cy="157.4" rx="3.2" ry="4.6" transform="rotate(-50 879.6 157.4)" fill="#5c8af0"/>
<path d="M902.5 164.8 L906.6 155.6 C910 153 915 155.4 915 159.8 C914.6 163 911.6 164.6 902.5 164.8 Z" fill="#dc3a2c"/><ellipse cx="911" cy="158.8" rx="3.2" ry="4.6" transform="rotate(55 911 158.8)" fill="#f05848"/>
<text x="890.2" y="138.5" font-family="Liberation Sans,sans-serif" font-size="11" font-weight="bold" fill="#fbeeb0">y</text>
<text x="869.5" y="155" font-family="Liberation Sans,sans-serif" font-size="11" font-weight="bold" fill="#fbeeb0">z</text>
<text x="915" y="158" font-family="Liberation Sans,sans-serif" font-size="11" font-weight="bold" fill="#fbeeb0">x</text>
<path d="M923.2 138.4 h6.6 v4.8 h-6.6 Z" fill="#f7e9b4"/><path d="M924.8 138.4 v-1.2 a1.8 1.8 0 0 1 3.6 -0.3" fill="none" stroke="#f7e9b4" stroke-width="1"/>
</svg>
<svg style="left:866px;top:96px" width="12" height="12" viewBox="0 0 12 12"><path d="M10.5 1.5 L1.5 6 L10.5 10.5 M1.5 6 H10.5" fill="none" stroke="#f3dc7a" stroke-width="1.1"/></svg>
<div class="t" style="left:881px;top:95px;font-size:12.5px;font-weight:bold;color:#ecd06c;opacity:.8">Persp</div>
<!-- AI Navigation panel -->
<div class="a" style="left:745px;top:195px;width:201px;height:237px;background:rgba(193,192,180,.94);border-radius:4px"></div>
<div class="a" style="left:750px;top:201px;width:15px;height:1px;background:#555"></div><div class="a" style="left:750px;top:204px;width:15px;height:1px;background:#555"></div>
<div class="t" style="left:770px;top:196.7px;font-size:12.5px">AI Navigation</div>
<div class="tri" style="left:752px;top:217px;border-top-color:#6e6e68"></div><div class="t" style="left:766px;top:213.7px;font-size:12.5px">Surfaces</div>
<div class="t" style="left:766px;top:232.7px;font-size:12.5px">Show Only Selected</div><div class="cb" style="left:927px;top:233px"></div>
<div class="t" style="left:766px;top:248.7px;font-size:12.5px">Show NavMesh</div><div class="cb ck" style="left:927px;top:249px"></div>
<div class="t" style="left:766px;top:264.7px;font-size:12.5px">Show HeightMesh</div><div class="cb ck" style="left:927px;top:265px"></div>
<div class="tri" style="left:752px;top:290px;border-top-color:#6e6e68"></div><div class="t" style="left:766px;top:286.7px;font-size:12.5px">Agents</div>
<div class="t" style="left:766px;top:305.7px;font-size:12.5px">Show Path Polygons</div><div class="cb ck" style="left:927px;top:306px"></div>
<div class="t" style="left:766px;top:321.7px;font-size:12.5px">Show Path Query Nodes</div><div class="cb ck" style="left:927px;top:322px"></div>
<div class="t" style="left:766px;top:337.7px;font-size:12.5px">Show Neighbours</div><div class="cb ck" style="left:927px;top:338px"></div>
<div class="t" style="left:766px;top:353.7px;font-size:12.5px">Show Walls</div><div class="cb ck" style="left:927px;top:354px"></div>
<div class="t" style="left:766px;top:369.7px;font-size:12.5px">Show Avoidance</div><div class="cb ck" style="left:927px;top:370px"></div>
<div class="tri" style="left:752px;top:395px;border-top-color:#6e6e68"></div><div class="t" style="left:766px;top:391.7px;font-size:12.5px">Obstacles</div>
<div class="t" style="left:766px;top:410.7px;font-size:12.5px">Show Carve Hull</div><div class="cb" style="left:927px;top:411px"></div>
<style>.ck::after{content:"";position:absolute;left:3.5px;top:0.5px;width:4px;height:7.5px;border:solid #222;border-width:0 1.5px 1.5px 0;transform:rotate(40deg)}</style>
<!-- cursor -->
<svg style="left:627px;top:238px" width="14" height="22" viewBox="0 0 14 22"><path d="M1 1 V17.5 L4.8 14 L7.6 20.4 L10.2 19.2 L7.4 13 H12.4 Z" fill="#fff" stroke="#000" stroke-width="1"/></svg>
</div>
<!-- GAME TABS -->
<div class="a" style="left:0;top:553px;width:949px;height:21px;background:#a5a5a5"></div>
<div class="a" style="left:0;top:553px;width:949px;height:1px;background:linear-gradient(90deg,#8f8468 0,#95876a 40%,#a89a50 60%,#b4b04a 75%,#bcbc50 100%)"></div>
<div class="a" style="left:0;top:555px;width:73px;height:19px;background:#cbcbcb;border-radius:3px 3px 0 0"></div>
<svg style="left:6px;top:561px" width="14" height="8" viewBox="0 0 14 8"><rect x="0.3" y="0.3" width="13.4" height="7.4" rx="3.7" fill="#444"/><path d="M2.4 4 H6 M4.2 2.2 V5.8" stroke="#cbcbcb" stroke-width="1"/><circle cx="9.3" cy="4.8" r="0.9" fill="#cbcbcb"/><circle cx="11.3" cy="3.2" r="0.9" fill="#cbcbcb"/></svg>
<div class="t" style="left:23px;top:558px;font-size:12.5px">Game</div>
<div class="a kb" style="left:935px;top:560px"></div>
<!-- GAME TOOLBAR -->
<div class="a" style="left:0;top:574px;width:949px;height:20px;background:#cbcbcb;border-bottom:1px solid #a0a0a0"></div>
<div class="t gt" style="left:4px">Game</div><div class="tri gtr" style="left:78px"></div><div class="sep" style="left:90px;top:574px;height:20px"></div>
<div class="t gt" style="left:100px">Display 1</div><div class="tri gtr" style="left:163px"></div><div class="sep" style="left:176px;top:574px;height:20px"></div>
<div class="t gt" style="left:180px">Free Aspect</div><div class="tri gtr" style="left:323px"></div><div class="sep" style="left:336px;top:574px;height:20px"></div>
<div class="t gt" style="left:343px">Scale</div>
<div class="a" style="left:385px;top:584px;width:145px;height:1px;background:#8a8a8a"></div><div class="a" style="left:380px;top:580px;width:9px;height:9px;border-radius:50%;background:#555"></div>
<div class="t gt" style="left:536px">1x</div><div class="sep" style="left:613px;top:574px;height:20px"></div>
<div class="t gt" style="left:618px">Play Focused</div><div class="tri gtr" style="left:711px"></div><div class="sep" style="left:724px;top:574px;height:20px"></div>
<svg style="left:729px;top:576px" width="16" height="16" viewBox="0 0 16 16"><ellipse cx="8" cy="9.2" rx="4" ry="5" fill="#555"/><circle cx="8" cy="4" r="2.4" fill="#555"/><path d="M4.5 7 L1.5 5 M4 9.5 H1 M4.5 12 L1.8 14 M11.5 7 L14.5 5 M12 9.5 H15 M11.5 12 L14.2 14 M6.5 2.5 L5 0.8 M9.5 2.5 L11 0.8" stroke="#555" stroke-width="1.1"/></svg>
<div class="sep" style="left:750px;top:574px;height:20px"></div><div class="sep" style="left:787px;top:574px;height:20px"></div>
<svg style="left:794px;top:578px" width="13" height="12" viewBox="0 0 13 12"><path d="M0.8 3.5 H2.2 V8.5 H0.8 Z M3.2 3.5 L6 1.2 V10.8 L3.2 8.5 Z" fill="#555"/><path d="M7.6 3.6 C8.8 5 8.8 7 7.6 8.4 M9.4 2.2 C11.4 4.4 11.4 7.6 9.4 9.8" stroke="#555" stroke-width="1" fill="none"/></svg>
<div class="sep" style="left:813px;top:574px;height:20px"></div>
<svg style="left:819px;top:579px" width="14" height="10" viewBox="0 0 14 10"><rect x="0.5" y="0.5" width="13" height="9" rx="1" fill="none" stroke="#555" stroke-width="1"/><path d="M2.5 3 H11.5 M2.5 5 H11.5 M3.5 7.2 H10.5" stroke="#555" stroke-width="1.1" stroke-dasharray="1.4 0.8"/></svg>
<div class="sep" style="left:839px;top:574px;height:20px"></div>
<div class="t gt" style="left:845px">Stats</div><div class="sep" style="left:879px;top:574px;height:20px"></div>
<div class="t gt" style="left:883px">Gizmos</div><div class="a" style="left:931px;top:578px;width:1px;height:11px;background:#999"></div><div class="tri gtr" style="left:935px"></div>
<style>.gt{top:577.6px;font-size:12.5px}.gtr{top:582px;border-left-width:4px;border-right-width:4px;border-top-width:5px}</style>
<!-- GAME VIEW -->
<div class="a" id="game" style="left:0;top:594px;width:949px;height:463px;overflow:hidden;background:#6d550f">
<div class="a" style="left:0;top:0;width:949px;height:463px;background:linear-gradient(90deg,#6d5610 0.0%,#6d5610 42.1%,#715911 63.2%,#7a6013 84.3%,#826614 100.0%)"></div>
<div class="a" style="left:0;top:6px;width:949px;height:457px;background:linear-gradient(90deg,#6d5610 0.0%,#6f5710 31.6%,#765d12 52.7%,#846815 73.8%,#947419 89.6%,#9c7a1a 100.0%);-webkit-mask-image:linear-gradient(180deg,transparent 0,#000 26.26%);mask-image:linear-gradient(180deg,transparent 0,#000 26.26%)"></div>
<div class="a" style="left:0;top:126px;width:949px;height:337px;background:linear-gradient(90deg,#6e5610 0.0%,#745b11 31.6%,#806414 52.7%,#8e6f17 68.5%,#a4811c 84.3%,#b28c1f 100.0%);-webkit-mask-image:linear-gradient(180deg,transparent 0,#000 35.61%);mask-image:linear-gradient(180deg,transparent 0,#000 35.61%)"></div>
<div class="a" style="left:0;top:246px;width:949px;height:217px;background:linear-gradient(90deg,#705810 0.0%,#795f12 26.3%,#8a6c16 47.4%,#9d7b1b 63.2%,#b79020 79.0%,#d2a526 100.0%);-webkit-mask-image:linear-gradient(180deg,transparent 0,#000 55.30%);mask-image:linear-gradient(180deg,transparent 0,#000 55.30%)"></div>
<div class="a" style="left:0;top:366px;width:949px;height:97px;background:linear-gradient(90deg,#6e5610 0.0%,#755c12 26.3%,#806414 42.1%,#907118 52.7%,#a5821c 63.2%,#bd9422 73.8%,#d0a326 84.3%,#e0b02a 94.8%,#e4b32b 100.0%);-webkit-mask-image:linear-gradient(180deg,transparent 0,#000 94.85%);mask-image:linear-gradient(180deg,transparent 0,#000 94.85%)"></div>
<svg style="left:0;top:0" width="949" height="463" viewBox="0 594 949 463">
<defs>
<filter id="hole" x="0" y="0" width="100%" height="100%" color-interpolation-filters="sRGB"><feTurbulence type="fractalNoise" baseFrequency="0.13" numOctaves="2" seed="7" result="n"/><feColorMatrix in="n" type="matrix" values="0 0 0 0 0 0 0 0 0 0 0 0 0 0 0 40 0 0 0 -18.2" result="a"/><feComposite in="SourceGraphic" in2="a" operator="in"/></filter>
<filter id="hole2" x="0" y="0" width="100%" height="100%" color-interpolation-filters="sRGB"><feTurbulence type="fractalNoise" baseFrequency="0.2" numOctaves="2" seed="11" result="n"/><feColorMatrix in="n" type="matrix" values="0 0 0 0 0 0 0 0 0 0 0 0 0 0 0 40 0 0 0 -19.6" result="a"/><feComposite in="SourceGraphic" in2="a" operator="in"/></filter>
<radialGradient id="gs" gradientUnits="userSpaceOnUse" cx="580" cy="941" r="30"><stop offset="0" stop-color="#ffe83a"/><stop offset="0.12" stop-color="#f0c830"/><stop offset="0.3" stop-color="#b08c1e"/><stop offset="0.6" stop-color="#7a6214"/><stop offset="0.85" stop-color="#3a2c08"/><stop offset="1" stop-color="#0a0600"/></radialGradient>
<filter id="gb" x="-50%" y="-50%" width="200%" height="200%"><feGaussianBlur stdDeviation="3"/></filter>
</defs>
<path d="M0 594 H46 L0 620 Z" fill="#6e6a6a"/><path d="M911 594 H949 V615.5 Z" fill="#6e6a6a"/>
<circle cx="393.3" cy="843" r="19.4" fill="#e9e83a" filter="url(#hole)"/>
<circle cx="455.3" cy="843" r="19.6" fill="#5ff03a" filter="url(#hole)"/>
<g filter="url(#hole2)"><rect x="453" y="849" width="49.5" height="33" fill="#e8872c"/><rect x="453" y="892" width="49.5" height="22.5" fill="#e8872c"/></g>
<rect x="452.5" y="881.5" width="50.5" height="11" fill="#e8872c"/>
<path d="M453 849 H502.5 M453 914 H502.5" stroke="#e8872c" stroke-width="1"/>
<g filter="url(#hole2)"><path d="M547 815 H588.5 L595 839.5 H543.3 Z" fill="#fff"/><path d="M543.3 848 H595 L588 870.8 H547 Z" fill="#fff"/></g>
<rect x="543.3" y="839" width="51.7" height="9.5" fill="#fff"/>
<path d="M547 815.5 H588.5 M547 870.3 H588" stroke="#fff" stroke-width="1.2"/>
<ellipse cx="549" cy="941" rx="19" ry="17" fill="#000" filter="url(#gb)"/>
</svg>
<svg style="left:0;top:0" width="949" height="463" viewBox="0 0 949 463">
<defs><clipPath id="s2c"><circle cx="570.5" cy="350.0" r="22.5"/></clipPath>
<filter id="s2b" color-interpolation-filters="sRGB" x="-20%" y="-20%" width="140%" height="140%"><feGaussianBlur stdDeviation="0.60"/></filter>
<radialGradient id="s2h" gradientUnits="userSpaceOnUse" cx="0" cy="0" r="15.0" gradientTransform="translate(580.0 347.7) rotate(0.0) scale(1 1.000)">
<stop offset="0.000" stop-color="#ffee3c" stop-opacity="1.000"/>
<stop offset="0.180" stop-color="#ffe236" stop-opacity="1.000"/>
<stop offset="0.350" stop-color="#f0c42c" stop-opacity="0.900"/>
<stop offset="0.550" stop-color="#cfa424" stop-opacity="0.600"/>
<stop offset="0.800" stop-color="#b08a20" stop-opacity="0.200"/>
<stop offset="1.000" stop-color="#a08020" stop-opacity="0.000"/>
</radialGradient>
</defs>
<g clip-path="url(#s2c)"><rect x="546.0" y="325.5" width="49.0" height="49.0" fill="#000"/><g filter="url(#s2b)">
<path fill="#050401" d="M565.1 328.2 L561.8 332.3 L561.2 335.8 L561.0 339.1 L561.1 342.4 L561.5 345.6 L562.0 348.8 L562.7 351.9 L563.5 355.0 L564.5 358.1 L565.7 361.1 L567.2 364.1 L568.9 367.0 L571.1 369.7 L575.9 371.8 L575.9 371.8 L618.8 357.9 L618.0 354.8 L617.3 351.7 L616.5 348.6 L615.7 345.4 L615.0 342.3 L614.2 339.2 L613.4 336.1 L612.6 333.0 L611.9 329.8 L611.1 326.7 L610.3 323.6 L609.6 320.5 L565.1 328.2Z"/>
<path fill="#181304" d="M565.4 328.1 L562.1 332.2 L561.4 335.7 L561.3 339.0 L561.4 342.3 L561.7 345.5 L562.2 348.7 L562.9 351.9 L563.8 355.0 L564.8 358.0 L566.0 361.0 L567.4 364.0 L569.1 366.9 L571.4 369.7 L576.2 371.8 L576.2 371.8 L618.8 357.9 L618.0 354.8 L617.3 351.7 L616.5 348.6 L615.7 345.4 L615.0 342.3 L614.2 339.2 L613.4 336.1 L612.6 333.0 L611.9 329.8 L611.1 326.7 L610.3 323.6 L609.6 320.5 L565.4 328.1Z"/>
<path fill="#251d06" d="M565.9 328.0 L562.6 332.1 L561.9 335.6 L561.8 338.9 L561.9 342.2 L562.2 345.4 L562.7 348.6 L563.4 351.7 L564.3 354.8 L565.3 357.9 L566.5 360.9 L567.9 363.9 L569.6 366.8 L571.9 369.5 L576.7 371.6 L576.7 371.6 L618.8 357.9 L618.0 354.8 L617.3 351.7 L616.5 348.5 L615.7 345.4 L615.0 342.3 L614.2 339.2 L613.4 336.1 L612.6 333.0 L611.9 329.8 L611.1 326.7 L610.3 323.6 L609.6 320.5 L565.9 328.0Z"/>
<path fill="#2f2608" d="M566.5 327.9 L563.2 332.0 L562.6 335.4 L562.4 338.8 L562.5 342.1 L562.9 345.3 L563.4 348.5 L564.1 351.6 L564.9 354.7 L565.9 357.7 L567.1 360.7 L568.6 363.7 L570.3 366.6 L572.5 369.3 L577.3 371.4 L577.3 371.4 L618.8 357.9 L618.0 354.8 L617.3 351.6 L616.5 348.5 L615.7 345.4 L615.0 342.3 L614.2 339.2 L613.4 336.1 L612.6 333.0 L611.9 329.9 L611.1 326.7 L610.3 323.6 L609.6 320.5 L566.5 327.9Z"/>
<path fill="#392e09" d="M567.3 327.8 L564.0 331.8 L563.3 335.3 L563.2 338.6 L563.3 341.9 L563.6 345.1 L564.2 348.3 L564.9 351.4 L565.7 354.5 L566.7 357.5 L567.9 360.5 L569.3 363.5 L571.0 366.3 L573.2 369.1 L578.0 371.2 L578.0 371.2 L618.8 357.8 L618.0 354.7 L617.3 351.6 L616.5 348.5 L615.7 345.4 L615.0 342.3 L614.2 339.2 L613.4 336.1 L612.6 333.0 L611.9 329.9 L611.1 326.8 L610.3 323.7 L609.6 320.6 L567.3 327.8Z"/>
<path fill="#42350b" d="M568.1 327.7 L564.9 331.7 L564.2 335.2 L564.1 338.5 L564.2 341.7 L564.5 344.9 L565.1 348.1 L565.7 351.2 L566.6 354.2 L567.6 357.3 L568.8 360.3 L570.2 363.2 L571.9 366.0 L574.1 368.8 L578.8 370.9 L578.8 370.9 L618.8 357.7 L618.0 354.6 L617.2 351.5 L616.5 348.5 L615.7 345.4 L614.9 342.3 L614.2 339.2 L613.4 336.1 L612.7 333.0 L611.9 329.9 L611.1 326.8 L610.4 323.8 L609.6 320.7 L568.1 327.7Z"/>
<path fill="#4d3d0c" d="M569.1 327.6 L565.9 331.6 L565.3 335.0 L565.1 338.3 L565.2 341.6 L565.5 344.7 L566.1 347.8 L566.7 350.9 L567.6 354.0 L568.6 357.0 L569.8 359.9 L571.2 362.8 L572.8 365.7 L575.0 368.4 L579.7 370.5 L579.7 370.5 L618.7 357.6 L618.0 354.5 L617.2 351.4 L616.5 348.4 L615.7 345.3 L614.9 342.3 L614.2 339.2 L613.4 336.1 L612.7 333.1 L611.9 330.0 L611.2 326.9 L610.4 323.9 L609.6 320.8 L569.1 327.6Z"/>
<path fill="#57450e" d="M570.2 327.6 L567.0 331.6 L566.4 335.0 L566.2 338.2 L566.3 341.4 L566.7 344.5 L567.2 347.6 L567.9 350.7 L568.7 353.7 L569.7 356.6 L570.8 359.6 L572.2 362.4 L573.9 365.2 L576.0 367.9 L580.7 370.0 L580.7 370.0 L618.7 357.4 L617.9 354.3 L617.2 351.3 L616.4 348.3 L615.7 345.2 L614.9 342.2 L614.2 339.2 L613.4 336.2 L612.7 333.1 L611.9 330.1 L611.2 327.1 L610.4 324.1 L609.7 321.0 L570.2 327.6Z"/>
<path fill="#5f4c0f" d="M571.4 327.6 L568.3 331.6 L567.6 334.9 L567.5 338.1 L567.6 341.2 L567.9 344.3 L568.4 347.4 L569.1 350.4 L569.9 353.3 L570.9 356.2 L572.0 359.1 L573.4 361.9 L575.0 364.7 L577.1 367.3 L581.7 369.4 L581.7 369.4 L618.6 357.1 L617.9 354.1 L617.1 351.1 L616.4 348.1 L615.7 345.2 L614.9 342.2 L614.2 339.2 L613.4 336.2 L612.7 333.2 L612.0 330.3 L611.2 327.3 L610.5 324.3 L609.8 321.3 L571.4 327.6Z"/>
<path fill="#685311" d="M572.7 327.8 L569.6 331.6 L569.0 334.9 L568.8 338.0 L568.9 341.1 L569.2 344.1 L569.7 347.1 L570.4 350.0 L571.2 352.9 L572.1 355.8 L573.3 358.6 L574.6 361.4 L576.2 364.1 L578.3 366.7 L582.8 368.6 L582.8 368.6 L618.5 356.7 L617.8 353.8 L617.1 350.9 L616.3 347.9 L615.6 345.0 L614.9 342.1 L614.2 339.2 L613.5 336.3 L612.7 333.4 L612.0 330.4 L611.3 327.5 L610.6 324.6 L609.8 321.7 L572.7 327.8Z"/>
<path fill="#6f5812" d="M574.0 328.0 L571.1 331.8 L570.4 334.9 L570.3 338.0 L570.4 341.0 L570.7 343.9 L571.2 346.8 L571.8 349.7 L572.6 352.5 L573.5 355.3 L574.6 358.0 L575.9 360.7 L577.5 363.3 L579.5 365.9 L583.9 367.8 L583.9 367.8 L618.4 356.2 L617.7 353.4 L617.0 350.6 L616.3 347.7 L615.6 344.9 L614.9 342.0 L614.2 339.2 L613.5 336.4 L612.8 333.5 L612.1 330.7 L611.4 327.8 L610.7 325.0 L610.0 322.2 L574.0 328.0Z"/>
<path fill="#755d13" d="M575.5 328.4 L572.6 332.0 L572.0 335.1 L571.9 338.0 L572.0 340.9 L572.3 343.7 L572.8 346.5 L573.4 349.3 L574.1 352.0 L575.0 354.7 L576.1 357.4 L577.3 360.0 L578.8 362.5 L580.8 364.9 L585.0 366.8 L585.0 366.8 L618.3 355.6 L617.6 352.9 L616.9 350.2 L616.2 347.4 L615.5 344.7 L614.9 341.9 L614.2 339.2 L613.5 336.5 L612.8 333.7 L612.1 331.0 L611.5 328.2 L610.8 325.5 L610.1 322.7 L575.5 328.4Z"/>
<path fill="#785f13" d="M577.1 328.9 L574.3 332.4 L573.8 335.3 L573.6 338.1 L573.7 340.9 L574.0 343.6 L574.5 346.2 L575.0 348.9 L575.7 351.5 L576.6 354.0 L577.6 356.6 L578.8 359.1 L580.2 361.5 L582.1 363.8 L586.1 365.6 L586.1 365.6 L618.1 354.9 L617.4 352.3 L616.8 349.7 L616.1 347.0 L615.5 344.4 L614.8 341.8 L614.2 339.2 L613.5 336.6 L612.9 334.0 L612.2 331.3 L611.6 328.7 L610.9 326.1 L610.3 323.5 L577.1 328.9Z"/>
<path fill="#7a6114" d="M578.7 329.7 L576.2 332.9 L575.6 335.7 L575.5 338.3 L575.6 340.9 L575.9 343.4 L576.3 346.0 L576.8 348.4 L577.5 350.9 L578.3 353.3 L579.3 355.7 L580.4 358.0 L581.7 360.3 L583.5 362.5 L587.3 364.1 L587.3 364.1 L617.8 354.0 L617.2 351.5 L616.6 349.0 L616.0 346.6 L615.4 344.1 L614.8 341.7 L614.2 339.2 L613.6 336.7 L613.0 334.3 L612.4 331.8 L611.7 329.3 L611.1 326.9 L610.5 324.4 L578.7 329.7Z"/>
<path fill="#7b6214" d="M580.6 330.6 L578.2 333.6 L577.7 336.2 L577.6 338.6 L577.7 341.0 L577.9 343.3 L578.3 345.7 L578.8 347.9 L579.4 350.2 L580.2 352.4 L581.0 354.6 L582.1 356.8 L583.3 358.9 L584.9 360.9 L588.4 362.4 L588.4 362.4 L617.6 352.8 L617.0 350.5 L616.4 348.3 L615.9 346.0 L615.3 343.7 L614.7 341.5 L614.2 339.2 L613.6 336.9 L613.1 334.7 L612.5 332.4 L611.9 330.1 L611.4 327.8 L610.8 325.6 L580.6 330.6Z"/>
<path fill="#7c6314" d="M582.5 332.0 L580.4 334.7 L580.0 336.9 L579.8 339.1 L579.9 341.2 L580.1 343.3 L580.5 345.4 L580.9 347.4 L581.5 349.4 L582.1 351.4 L582.9 353.4 L583.8 355.3 L585.0 357.2 L586.4 359.0 L589.5 360.3 L589.5 360.3 L617.2 351.3 L616.7 349.3 L616.2 347.3 L615.7 345.3 L615.2 343.2 L614.7 341.2 L614.2 339.2 L613.7 337.2 L613.2 335.1 L612.7 333.1 L612.2 331.1 L611.7 329.1 L611.2 327.0 L582.5 332.0Z"/>
<path fill="#7d6414" d="M584.6 333.9 L582.9 336.1 L582.5 338.0 L582.4 339.8 L582.5 341.6 L582.7 343.4 L582.9 345.1 L583.3 346.8 L583.8 348.5 L584.3 350.2 L585.0 351.8 L585.8 353.4 L586.7 355.0 L587.9 356.5 L590.5 357.7 L590.5 357.7 L592.3 355.4 L616.3 347.7 L615.9 346.0 L615.4 344.3 L615.0 342.6 L614.6 340.9 L614.2 339.2 L613.8 337.5 L613.3 335.8 L612.9 334.1 L612.5 332.4 L612.1 330.7 L587.3 335.0 L584.6 333.9Z"/>
<path fill="#7e6414" d="M587.1 336.7 L585.8 338.3 L585.5 339.7 L585.4 341.0 L585.5 342.3 L585.6 343.6 L585.8 344.9 L586.1 346.1 L586.4 347.4 L586.9 348.6 L587.3 349.8 L587.9 351.0 L588.6 352.1 L589.5 353.2 L591.4 354.0 L591.4 354.0 L592.7 352.4 L592.9 351.0 L593.0 349.7 L615.1 342.9 L614.8 341.7 L614.5 340.4 L614.2 339.2 L613.9 338.0 L613.6 336.7 L613.3 335.5 L590.5 339.8 L589.9 338.6 L589.0 337.5 L587.1 336.7Z"/>
</g>
<rect x="546.0" y="325.5" width="49.0" height="49.0" fill="url(#s2h)"/>
</g>
</svg>
</div>
<!-- STATUS BAR -->
<div class="a" style="left:0;top:1057px;width:1920px;height:23px;background:#8a8a8b"></div>
<div class="a" style="left:1840px;top:1059px;width:1px;height:21px;background:#7c7c7c"></div><div class="a" style="left:1867px;top:1059px;width:1px;height:21px;background:#7c7c7c"></div><div class="a" style="left:1894px;top:1059px;width:1px;height:21px;background:#7c7c7c"></div>
<svg style="left:1845px;top:1061px" width="16" height="16" viewBox="0 0 16 16"><ellipse cx="8" cy="9.2" rx="4" ry="5" fill="#595959"/><circle cx="8" cy="4" r="2.4" fill="#595959"/><path d="M4.5 7 L1.5 5 M4 9.5 H1 M4.5 12 L1.8 14 M11.5 7 L14.5 5 M12 9.5 H15 M11.5 12 L14.2 14" stroke="#595959" stroke-width="1.1"/><path d="M2 1.5 L14.5 15" stroke="#8a8a8b" stroke-width="2.4"/><path d="M2 1.5 L14.5 15" stroke="#595959" stroke-width="1"/></svg>
<svg style="left:1872px;top:1062px" width="16" height="15" viewBox="0 0 16 15"><ellipse cx="8" cy="3.5" rx="6" ry="2.8" fill="#595959"/><path d="M2 6 C4 9 12 9 14 6 V8 C12 11 4 11 2 8 Z M2 10 C4 13 12 13 14 10 V12 C12 15 4 15 2 12 Z" fill="#595959"/><path d="M2 2 L14.5 14.5" stroke="#8a8a8b" stroke-width="2.4"/><path d="M2 2 L14.5 14.5" stroke="#595959" stroke-width="1"/></svg>
<svg style="left:1899px;top:1062px" width="15" height="15" viewBox="0 0 15 15"><circle cx="7.5" cy="7.5" r="6.6" fill="none" stroke="#595959" stroke-width="1"/><path d="M4.6 7.6 L6.8 9.8 L10.6 5.6" fill="none" stroke="#595959" stroke-width="1.2"/></svg>
<!-- RIGHT SIDE -->
<div class="a" style="left:949px;top:73px;width:971px;height:984px;background:#8c8c8d"></div>
<div class="a" style="left:951px;top:73px;width:330px;height:19px;background:#a5a5a5"></div>
<div class="a" style="left:951px;top:73px;width:95px;height:19px;background:#cbcbcb;border-radius:3px 3px 0 0"></div>
<svg style="left:960px;top:77px" width="12" height="10" viewBox="0 0 12 10"><path d="M3.5 1.5 H11.5 M3.5 5 H11.5 M3.5 8.5 H11.5" stroke="#555" stroke-width="1.1"/><path d="M0.3 1.5 H1.8 M0.3 5 H1.8 M0.3 8.5 H1.8" stroke="#555" stroke-width="1.1"/></svg>
<div class="t" style="left:975px;top:76px;font-size:12.5px">Hierarchy</div>
<svg style="left:1246px;top:77px" width="9" height="10" viewBox="0 0 9 10"><rect x="0.5" y="4.5" width="8" height="5" rx="0.8" fill="none" stroke="#555" stroke-width="1"/><path d="M2.2 4.5 V2.8 A2.3 2.3 0 0 1 6.8 2.8" fill="none" stroke="#555" stroke-width="1"/></svg>
<div class="a kb" style="left:1267px;top:77px"></div>
<div class="a" style="left:951px;top:92px;width:330px;height:549px;background:#c8c8c8"></div>
<div class="a" style="left:951px;top:92px;width:330px;height:20px;background:#cbcbcb;border-bottom:1px solid #a8a8a8"></div>
<svg style="left:958px;top:97px" width="11" height="11" viewBox="0 0 11 11"><path d="M5.5 0.5 V10.5 M0.5 5.5 H10.5" stroke="#333" stroke-width="1.9"/></svg>
<div class="tri" style="left:974px;top:100px;border-left-width:4px;border-right-width:4px;border-top-width:5px"></div>
<div class="fld" style="left:994px;top:95px;width:268px;height:15px;border-radius:4px 0 0 4px"></div>
<svg style="left:998px;top:98px" width="9" height="9" viewBox="0 0 9 9"><circle cx="3.4" cy="3.4" r="2.5" fill="none" stroke="#555" stroke-width="1"/><path d="M5.2 5.2 L8 8" stroke="#555" stroke-width="1.2"/></svg>
<div class="tri" style="left:1005px;top:101px;border-left-width:1.8px;border-right-width:1.8px;border-top-width:2.2px"></div>
<div class="t" style="left:1013px;top:95px;font-size:12.5px;color:#a0a0a0">All</div>
<div class="a" style="left:1261px;top:95px;width:17px;height:15px;background:#d2d2d2;border:1px solid #aaa;border-radius:0 3px 3px 0"></div>
<svg style="left:1263px;top:96px" width="13" height="13" viewBox="0 0 13 13"><path d="M3.5 0.5 H12.5 V9.5 H6 M3.5 0.5 V7" fill="none" stroke="#555" stroke-width="1"/><rect x="0.5" y="7.5" width="5" height="5" fill="none" stroke="#555" stroke-width="1"/><path d="M6 7 L10 3 M7 3 H10 V6" fill="none" stroke="#555" stroke-width="1"/></svg>
<div class="a" style="left:951px;top:128px;width:32px;height:513px;background:#bcbcbc"></div>
<div class="a" style="left:951px;top:112px;width:330px;height:16px;background:#ececec"></div>
<div class="tri" style="left:984px;top:117.5px;border-top-color:#777"></div>
<svg style="left:998.5px;top:112.5px" width="14" height="15" viewBox="0 0 14 15"><path d="M7 0.6 L13.2 4.2 V11 L7 14.6 L0.8 11 V4.2 Z" fill="#222"/><path d="M7 7.6 V12 M7 7.6 L3.2 5.4 M7 7.6 L10.8 5.4" stroke="#ececec" stroke-width="1.5" fill="none"/><path d="M4.6 3.6 L7 2.4 L9.4 3.6 M2.6 7 V9.8 L4.8 11.2 M11.4 7 V9.8 L9.2 11.2" stroke="#ececec" stroke-width="1" fill="none"/></svg>
<div class="t" style="left:1015px;top:113.5px;font-size:12.5px;font-weight:bold;letter-spacing:0.6px">SampleScene</div>
<div class="a kb" style="left:1268px;top:115px"></div>
<svg style="left:1012px;top:129.5px;opacity:1" width="14" height="15" viewBox="0 0 14 15"><path d="M7 1 L12.8 3.8 V10.8 L7 14 L1.2 10.8 V3.8 Z M1.2 3.8 L7 6.8 L12.8 3.8 M7 6.8 V14" fill="none" stroke="#333" stroke-width="1" stroke-linejoin="round"/></svg>
<div class="t" style="left:1029px;top:130px;font-size:12.5px;">Main Camera</div>
<svg style="left:1012px;top:145.5px;opacity:1" width="14" height="15" viewBox="0 0 14 15"><path d="M7 1 L12.8 3.8 V10.8 L7 14 L1.2 10.8 V3.8 Z M1.2 3.8 L7 6.8 L12.8 3.8 M7 6.8 V14" fill="none" stroke="#333" stroke-width="1" stroke-linejoin="round"/></svg>
<div class="t" style="left:1029px;top:146px;font-size:12.5px;">Directional Light</div>
<svg style="left:1012px;top:161.5px;opacity:.4" width="14" height="15" viewBox="0 0 14 15"><path d="M7 1 L12.8 3.8 V10.8 L7 14 L1.2 10.8 V3.8 Z M1.2 3.8 L7 6.8 L12.8 3.8 M7 6.8 V14" fill="none" stroke="#333" stroke-width="1" stroke-linejoin="round"/></svg>
<div class="t" style="left:1029px;top:162px;font-size:12.5px;color:#8e8e8e">Directional Light (1)</div>
<svg style="left:1012px;top:177.5px;opacity:.4" width="14" height="15" viewBox="0 0 14 15"><path d="M7 1 L12.8 3.8 V10.8 L7 14 L1.2 10.8 V3.8 Z M1.2 3.8 L7 6.8 L12.8 3.8 M7 6.8 V14" fill="none" stroke="#333" stroke-width="1" stroke-linejoin="round"/></svg>
<div class="t" style="left:1029px;top:178px;font-size:12.5px;color:#8e8e8e">Sphere</div>
<svg style="left:1012px;top:193.5px;opacity:.4" width="14" height="15" viewBox="0 0 14 15"><path d="M7 1 L12.8 3.8 V10.8 L7 14 L1.2 10.8 V3.8 Z M1.2 3.8 L7 6.8 L12.8 3.8 M7 6.8 V14" fill="none" stroke="#333" stroke-width="1" stroke-linejoin="round"/></svg>
<div class="t" style="left:1029px;top:194px;font-size:12.5px;color:#8e8e8e">Cube</div>
<svg style="left:1012px;top:209.5px;opacity:.4" width="14" height="15" viewBox="0 0 14 15"><path d="M7 1 L12.8 3.8 V10.8 L7 14 L1.2 10.8 V3.8 Z M1.2 3.8 L7 6.8 L12.8 3.8 M7 6.8 V14" fill="none" stroke="#333" stroke-width="1" stroke-linejoin="round"/></svg>
<div class="t" style="left:1029px;top:210px;font-size:12.5px;color:#8e8e8e">Cube (1)</div>
<svg style="left:1012px;top:225.5px;opacity:.4" width="14" height="15" viewBox="0 0 14 15"><path d="M7 1 L12.8 3.8 V10.8 L7 14 L1.2 10.8 V3.8 Z M1.2 3.8 L7 6.8 L12.8 3.8 M7 6.8 V14" fill="none" stroke="#333" stroke-width="1" stroke-linejoin="round"/></svg>
<div class="t" style="left:1029px;top:226px;font-size:12.5px;color:#8e8e8e">Sphere (1)</div>
<svg style="left:1012px;top:241.5px;opacity:1" width="14" height="15" viewBox="0 0 14 15"><path d="M7 1 L12.8 3.8 V10.8 L7 14 L1.2 10.8 V3.8 Z M1.2 3.8 L7 6.8 L12.8 3.8 M7 6.8 V14" fill="none" stroke="#333" stroke-width="1" stroke-linejoin="round"/></svg>
<div class="t" style="left:1029px;top:242px;font-size:12.5px;">Sphere (2)</div>
<svg style="left:1012px;top:257.5px;opacity:1" width="14" height="15" viewBox="0 0 14 15"><path d="M7 1 L12.8 3.8 V10.8 L7 14 L1.2 10.8 V3.8 Z M1.2 3.8 L7 6.8 L12.8 3.8 M7 6.8 V14" fill="none" stroke="#333" stroke-width="1" stroke-linejoin="round"/></svg>
<div class="t" style="left:1029px;top:258px;font-size:12.5px;">Sphere (3)</div>
<svg style="left:1012px;top:273.5px;opacity:1" width="14" height="15" viewBox="0 0 14 15"><path d="M7 1 L12.8 3.8 V10.8 L7 14 L1.2 10.8 V3.8 Z M1.2 3.8 L7 6.8 L12.8 3.8 M7 6.8 V14" fill="none" stroke="#333" stroke-width="1" stroke-linejoin="round"/></svg>
<div class="t" style="left:1029px;top:274px;font-size:12.5px;">Cube (2)</div>
<svg style="left:1012px;top:289.5px;opacity:1" width="14" height="15" viewBox="0 0 14 15"><path d="M7 1 L12.8 3.8 V10.8 L7 14 L1.2 10.8 V3.8 Z M1.2 3.8 L7 6.8 L12.8 3.8 M7 6.8 V14" fill="none" stroke="#333" stroke-width="1" stroke-linejoin="round"/></svg>
<div class="t" style="left:1029px;top:290px;font-size:12.5px;">Cube (3)</div>
<svg style="left:1012px;top:305.5px;opacity:.4" width="14" height="15" viewBox="0 0 14 15"><path d="M7 1 L12.8 3.8 V10.8 L7 14 L1.2 10.8 V3.8 Z M1.2 3.8 L7 6.8 L12.8 3.8 M7 6.8 V14" fill="none" stroke="#333" stroke-width="1" stroke-linejoin="round"/></svg>
<div class="t" style="left:1029px;top:306px;font-size:12.5px;color:#8e8e8e">Canvas</div>
<div class="trir" style="left:1001px;top:309px"></div>
<svg style="left:1012px;top:321.5px;opacity:1" width="14" height="15" viewBox="0 0 14 15"><path d="M7 1 L12.8 3.8 V10.8 L7 14 L1.2 10.8 V3.8 Z M1.2 3.8 L7 6.8 L12.8 3.8 M7 6.8 V14" fill="none" stroke="#333" stroke-width="1" stroke-linejoin="round"/></svg>
<div class="t" style="left:1029px;top:322px;font-size:12.5px;">EventSystem</div>
<svg style="left:1012px;top:337.5px;opacity:.4" width="14" height="15" viewBox="0 0 14 15"><path d="M7 1 L12.8 3.8 V10.8 L7 14 L1.2 10.8 V3.8 Z M1.2 3.8 L7 6.8 L12.8 3.8 M7 6.8 V14" fill="none" stroke="#333" stroke-width="1" stroke-linejoin="round"/></svg>
<div class="t" style="left:1029px;top:338px;font-size:12.5px;color:#8e8e8e">MeshBallGO</div>
<svg style="left:1012px;top:353.5px;opacity:1" width="14" height="15" viewBox="0 0 14 15"><path d="M7 1 L12.8 3.8 V10.8 L7 14 L1.2 10.8 V3.8 Z M1.2 3.8 L7 6.8 L12.8 3.8 M7 6.8 V14" fill="none" stroke="#333" stroke-width="1" stroke-linejoin="round"/></svg>
<div class="t" style="left:1029px;top:354px;font-size:12.5px;">Sphere (4)</div>
<svg style="left:1012px;top:369.5px;opacity:1" width="14" height="15" viewBox="0 0 14 15"><path d="M7 1 L12.8 3.8 V10.8 L7 14 L1.2 10.8 V3.8 Z M1.2 3.8 L7 6.8 L12.8 3.8 M7 6.8 V14" fill="none" stroke="#333" stroke-width="1" stroke-linejoin="round"/></svg>
<div class="t" style="left:1029px;top:370px;font-size:12.5px;">Plane</div>
<svg style="left:1012px;top:385.5px;opacity:.4" width="14" height="15" viewBox="0 0 14 15"><path d="M7 1 L12.8 3.8 V10.8 L7 14 L1.2 10.8 V3.8 Z M1.2 3.8 L7 6.8 L12.8 3.8 M7 6.8 V14" fill="none" stroke="#333" stroke-width="1" stroke-linejoin="round"/></svg>
<div class="t" style="left:1029px;top:386px;font-size:12.5px;color:#8e8e8e">Cube (4)</div>
<div class="a" style="left:1283px;top:73px;width:299px;height:19px;background:#a5a5a5"></div>
<div class="a" style="left:1283px;top:73px;width:81px;height:19px;background:#cbcbcb;border-radius:3px 3px 0 0;border-top:2px solid #5c85bd"></div>
<svg style="left:1291px;top:77px" width="13" height="11" viewBox="0 0 14 12"><path d="M0.5 1 H5.2 L6.6 2.8 H13.5 V11.5 H0.5 Z" fill="#505050"/></svg>
<div class="t" style="left:1307px;top:76px;font-size:12.5px">Project</div>
<svg style="left:1547px;top:77px" width="9" height="10" viewBox="0 0 9 10"><rect x="0.5" y="4.5" width="8" height="5" rx="0.8" fill="none" stroke="#555" stroke-width="1"/><path d="M2.2 4.5 V2.8 A2.3 2.3 0 0 1 6.8 2.8" fill="none" stroke="#555" stroke-width="1"/></svg>
<div class="a kb" style="left:1568px;top:77px"></div>
<div class="a" style="left:1283px;top:92px;width:299px;height:549px;background:#c8c8c8"></div>
<div class="a" style="left:1283px;top:92px;width:299px;height:21px;background:#cbcbcb;border-bottom:1px solid #a8a8a8"></div>
<svg style="left:1290px;top:97px" width="11" height="11" viewBox="0 0 11 11"><path d="M5.5 0.5 V10.5 M0.5 5.5 H10.5" stroke="#333" stroke-width="1.9"/></svg>
<div class="tri" style="left:1306px;top:100px;border-left-width:4px;border-right-width:4px;border-top-width:5px"></div>
<div class="fld" style="left:1328px;top:95px;width:116px;height:15px;border-radius:4px 0 0 4px"></div>
<svg style="left:1332px;top:98px" width="9" height="9" viewBox="0 0 9 9"><circle cx="3.4" cy="3.4" r="2.5" fill="none" stroke="#555" stroke-width="1"/><path d="M5.2 5.2 L8 8" stroke="#555" stroke-width="1.2"/></svg>
<div class="a" style="left:1444px;top:95px;width:17px;height:15px;background:#d2d2d2;border:1px solid #aaa;border-radius:0 3px 3px 0"></div>
<svg style="left:1446px;top:96px" width="13" height="13" viewBox="0 0 13 13"><path d="M3.5 0.5 H12.5 V9.5 H6 M3.5 0.5 V7" fill="none" stroke="#555" stroke-width="1"/><rect x="0.5" y="7.5" width="5" height="5" fill="none" stroke="#555" stroke-width="1"/><path d="M6 7 L10 3 M7 3 H10 V6" fill="none" stroke="#555" stroke-width="1"/></svg>
<div class="sep" style="left:1465px;top:93px;height:18px;background:#b0b0b0"></div>
<div class="sep" style="left:1490px;top:93px;height:18px;background:#b0b0b0"></div>
<div class="sep" style="left:1516px;top:93px;height:18px;background:#b0b0b0"></div>
<div class="sep" style="left:1542px;top:93px;height:18px;background:#b0b0b0"></div>
<svg style="left:1471px;top:95px" width="14" height="14" viewBox="0 0 14 14"><rect x="2" y="0.8" width="5.6" height="5.6" fill="#505050"/><circle cx="4.6" cy="9.8" r="3.6" fill="#505050"/><path d="M10.6 3.6 L13.6 10.2 H7.6 Z" fill="#505050"/></svg>
<svg style="left:1497px;top:96px" width="13" height="12" viewBox="0 0 13 12"><path d="M5.6 0.8 L11.6 0.8 L12 6.2 L6.6 11.4 L0.8 5.8 Z" fill="#505050" transform="rotate(8 6 6)"/><circle cx="9.4" cy="3.4" r="1" fill="#cbcbcb"/></svg>
<div class="a" style="left:1523px;top:96px;width:12px;height:12px;border-radius:50%;background:#c6c6c6"></div>
<svg style="left:1548px;top:96px" width="15" height="12" viewBox="0 0 15 12"><path d="M0.8 6 C3.5 1.6 11.5 1.6 14.2 6 C11.5 10.4 3.5 10.4 0.8 6 Z" fill="none" stroke="#444" stroke-width="1.1"/><circle cx="7.5" cy="6" r="1.6" fill="#444"/><path d="M3 11.5 L12 0.5" stroke="#444" stroke-width="1.2"/></svg>
<div class="t" style="left:1564px;top:95px;font-size:12.5px;color:#222">15</div>
<div class="a" style="left:1283px;top:112px;width:286px;height:509px;overflow:hidden">
<svg style="left:59px;top:-2.5px" width="13" height="14" viewBox="0 0 13 14"><rect x="0.5" y="0.5" width="12" height="13" rx="1.5" fill="#f4f4f4"/><path d="M5 3.4 L4 11 M8.6 3.4 L7.6 11 M2.8 5.6 H10.4 M2.4 8.6 H10" stroke="#3d8f3d" stroke-width="1.15"/></svg>
<div class="t" style="left:76px;top:-3px;font-size:12.5px;">PerObjectMaterialProperties</div>
<div class="tri" style="left:32px;top:17px;border-top-color:#777"></div>
<svg style="left:46px;top:15px" width="13.5" height="10.5" viewBox="0 0 15 12"><path d="M0.5 1 H5 L6.4 2.8 H12.5 V4.6 H3.2 L0.5 10.6 Z" fill="#505050"/><path d="M3.6 5.4 H14.6 L12 11.5 H0.9 Z" fill="#505050"/></svg>
<div class="t" style="left:62px;top:13px;font-size:12.5px;">Runtime</div>
<svg style="left:59px;top:29.5px" width="13" height="14" viewBox="0 0 13 14"><rect x="0.5" y="0.5" width="12" height="13" rx="1.5" fill="#f4f4f4"/><path d="M5 3.4 L4 11 M8.6 3.4 L7.6 11 M2.8 5.6 H10.4 M2.4 8.6 H10" stroke="#3d8f3d" stroke-width="1.15"/></svg>
<div class="t" style="left:76px;top:29px;font-size:12.5px;">CameraRenderer</div>
<svg style="left:59px;top:45.5px" width="13" height="14" viewBox="0 0 13 14"><rect x="0.5" y="0.5" width="12" height="13" rx="1.5" fill="#f4f4f4"/><path d="M5 3.4 L4 11 M8.6 3.4 L7.6 11 M2.8 5.6 H10.4 M2.4 8.6 H10" stroke="#3d8f3d" stroke-width="1.15"/></svg>
<div class="t" style="left:76px;top:45px;font-size:12.5px;">CameraRenderer.Editor</div>
<svg style="left:59px;top:61.5px" width="13" height="14" viewBox="0 0 13 14"><rect x="0.5" y="0.5" width="12" height="13" rx="1.5" fill="#f4f4f4"/><path d="M5 3.4 L4 11 M8.6 3.4 L7.6 11 M2.8 5.6 H10.4 M2.4 8.6 H10" stroke="#3d8f3d" stroke-width="1.15"/></svg>
<div class="t" style="left:76px;top:61px;font-size:12.5px;">CustomRenderPipeline</div>
<svg style="left:59px;top:77.5px" width="13" height="14" viewBox="0 0 13 14"><path d="M0.5 1.5 A1 1 0 0 1 1.5 0.5 H9 L12.5 4 V12.5 A1 1 0 0 1 11.5 13.5 H1.5 A1 1 0 0 1 0.5 12.5 Z" fill="#f4f4f4"/><circle cx="7" cy="7.8" r="3.4" fill="#2d62b4"/><circle cx="6" cy="6.8" r="1.9" fill="#b8d2f4"/><path d="M2.6 11.2 H6.5" stroke="#2d62b4" stroke-width="1.3"/></svg>
<div class="t" style="left:76px;top:77px;font-size:12.5px;">CustomRenderPipelineAsset</div>
<svg style="left:59px;top:93.5px" width="13" height="14" viewBox="0 0 13 14"><rect x="0.5" y="0.5" width="12" height="13" rx="1.5" fill="#f4f4f4"/><path d="M5 3.4 L4 11 M8.6 3.4 L7.6 11 M2.8 5.6 H10.4 M2.4 8.6 H10" stroke="#3d8f3d" stroke-width="1.15"/></svg>
<div class="t" style="left:76px;top:93px;font-size:12.5px;">Lighting</div>
<svg style="left:59px;top:109.5px" width="13" height="14" viewBox="0 0 13 14"><rect x="0.5" y="0.5" width="12" height="13" rx="1.5" fill="#f4f4f4"/><path d="M5 3.4 L4 11 M8.6 3.4 L7.6 11 M2.8 5.6 H10.4 M2.4 8.6 H10" stroke="#3d8f3d" stroke-width="1.15"/></svg>
<div class="t" style="left:76px;top:109px;font-size:12.5px;">Shadows</div>
<svg style="left:59px;top:125.5px" width="13" height="14" viewBox="0 0 13 14"><rect x="0.5" y="0.5" width="12" height="13" rx="1.5" fill="#f4f4f4"/><path d="M5 3.4 L4 11 M8.6 3.4 L7.6 11 M2.8 5.6 H10.4 M2.4 8.6 H10" stroke="#3d8f3d" stroke-width="1.15"/></svg>
<div class="t" style="left:76px;top:125px;font-size:12.5px;">ShadowSettings</div>
<div class="tri" style="left:32px;top:145px;border-top-color:#777"></div>
<svg style="left:46px;top:143px" width="13.5" height="10.5" viewBox="0 0 15 12"><path d="M0.5 1 H5 L6.4 2.8 H12.5 V4.6 H3.2 L0.5 10.6 Z" fill="#505050"/><path d="M3.6 5.4 H14.6 L12 11.5 H0.9 Z" fill="#505050"/></svg>
<div class="t" style="left:62px;top:141px;font-size:12.5px;">ShaderLibrary</div>
<svg style="left:59px;top:157.5px" width="13" height="14" viewBox="0 0 13 14"><path d="M0.5 1.5 A1 1 0 0 1 1.5 0.5 H9 L12.5 4 V12.5 A1 1 0 0 1 11.5 13.5 H1.5 A1 1 0 0 1 0.5 12.5 Z" fill="#f4f4f4"/><path d="M2.6 5.4 H9.6 M2.6 7.8 H9.6 M2.6 10.2 H7" stroke="#3a6ea8" stroke-width="1.15"/></svg>
<div class="t" style="left:76px;top:157px;font-size:12.5px;">BRDF</div>
<svg style="left:59px;top:173.5px" width="13" height="14" viewBox="0 0 13 14"><path d="M0.5 1.5 A1 1 0 0 1 1.5 0.5 H9 L12.5 4 V12.5 A1 1 0 0 1 11.5 13.5 H1.5 A1 1 0 0 1 0.5 12.5 Z" fill="#f4f4f4"/><path d="M2.6 5.4 H9.6 M2.6 7.8 H9.6 M2.6 10.2 H7" stroke="#3a6ea8" stroke-width="1.15"/></svg>
<div class="t" style="left:76px;top:173px;font-size:12.5px;">Common</div>
<svg style="left:59px;top:189.5px" width="13" height="14" viewBox="0 0 13 14"><path d="M0.5 1.5 A1 1 0 0 1 1.5 0.5 H9 L12.5 4 V12.5 A1 1 0 0 1 11.5 13.5 H1.5 A1 1 0 0 1 0.5 12.5 Z" fill="#f4f4f4"/><path d="M2.6 5.4 H9.6 M2.6 7.8 H9.6 M2.6 10.2 H7" stroke="#3a6ea8" stroke-width="1.15"/></svg>
<div class="t" style="left:76px;top:189px;font-size:12.5px;">Light</div>
<svg style="left:59px;top:205.5px" width="13" height="14" viewBox="0 0 13 14"><path d="M0.5 1.5 A1 1 0 0 1 1.5 0.5 H9 L12.5 4 V12.5 A1 1 0 0 1 11.5 13.5 H1.5 A1 1 0 0 1 0.5 12.5 Z" fill="#f4f4f4"/><path d="M2.6 5.4 H9.6 M2.6 7.8 H9.6 M2.6 10.2 H7" stroke="#3a6ea8" stroke-width="1.15"/></svg>
<div class="t" style="left:76px;top:205px;font-size:12.5px;">Lighting</div>
<svg style="left:59px;top:221.5px" width="13" height="14" viewBox="0 0 13 14"><path d="M0.5 1.5 A1 1 0 0 1 1.5 0.5 H9 L12.5 4 V12.5 A1 1 0 0 1 11.5 13.5 H1.5 A1 1 0 0 1 0.5 12.5 Z" fill="#f4f4f4"/><path d="M2.6 5.4 H9.6 M2.6 7.8 H9.6 M2.6 10.2 H7" stroke="#3a6ea8" stroke-width="1.15"/></svg>
<div class="t" style="left:76px;top:221px;font-size:12.5px;">Shadows</div>
<svg style="left:59px;top:237.5px" width="13" height="14" viewBox="0 0 13 14"><path d="M0.5 1.5 A1 1 0 0 1 1.5 0.5 H9 L12.5 4 V12.5 A1 1 0 0 1 11.5 13.5 H1.5 A1 1 0 0 1 0.5 12.5 Z" fill="#f4f4f4"/><path d="M2.6 5.4 H9.6 M2.6 7.8 H9.6 M2.6 10.2 H7" stroke="#3a6ea8" stroke-width="1.15"/></svg>
<div class="t" style="left:76px;top:237px;font-size:12.5px;">Surface</div>
<svg style="left:59px;top:253.5px" width="13" height="14" viewBox="0 0 13 14"><path d="M0.5 1.5 A1 1 0 0 1 1.5 0.5 H9 L12.5 4 V12.5 A1 1 0 0 1 11.5 13.5 H1.5 A1 1 0 0 1 0.5 12.5 Z" fill="#f4f4f4"/><path d="M2.6 5.4 H9.6 M2.6 7.8 H9.6 M2.6 10.2 H7" stroke="#3a6ea8" stroke-width="1.15"/></svg>
<div class="t" style="left:76px;top:253px;font-size:12.5px;">UnityInput</div>
<div class="tri" style="left:32px;top:273px;border-top-color:#777"></div>
<svg style="left:46px;top:271px" width="13.5" height="10.5" viewBox="0 0 15 12"><path d="M0.5 1 H5 L6.4 2.8 H12.5 V4.6 H3.2 L0.5 10.6 Z" fill="#505050"/><path d="M3.6 5.4 H14.6 L12 11.5 H0.9 Z" fill="#505050"/></svg>
<div class="t" style="left:62px;top:269px;font-size:12.5px;">Shaders</div>
<svg style="left:59px;top:285.5px" width="14" height="14" viewBox="0 0 14 14"><circle cx="7" cy="7" r="6.5" fill="#2868c0"/><circle cx="5.6" cy="5.4" r="3.3" fill="#e4eefc"/></svg>
<div class="t" style="left:76px;top:285px;font-size:12.5px;">Custom RP_Lit</div>
<svg style="left:59px;top:301.5px" width="14" height="14" viewBox="0 0 14 14"><circle cx="7" cy="7" r="6.5" fill="#2868c0"/><circle cx="5.6" cy="5.4" r="3.3" fill="#e4eefc"/></svg>
<div class="t" style="left:76px;top:301px;font-size:12.5px;">Custom RP_Unlit</div>
<svg style="left:59px;top:317px" width="13" height="14" viewBox="0 0 13 14"><defs><linearGradient id="sg1" x1="0" y1="0" x2="1" y2="1"><stop offset="0" stop-color="#f0e890"/><stop offset="0.5" stop-color="#8fe0d0"/><stop offset="1" stop-color="#c890e0"/></linearGradient></defs><rect x="0.5" y="0.5" width="12" height="13" rx="1.5" fill="url(#sg1)"/><text x="6.5" y="11" font-family="Liberation Sans,sans-serif" font-size="10.5" font-weight="bold" text-anchor="middle" fill="#222">S</text></svg>
<div class="t" style="left:76px;top:317px;font-size:12.5px;">Lit</div>
<svg style="left:59px;top:333.5px" width="13" height="14" viewBox="0 0 13 14"><path d="M0.5 1.5 A1 1 0 0 1 1.5 0.5 H9 L12.5 4 V12.5 A1 1 0 0 1 11.5 13.5 H1.5 A1 1 0 0 1 0.5 12.5 Z" fill="#f4f4f4"/><path d="M2.6 5.4 H9.6 M2.6 7.8 H9.6 M2.6 10.2 H7" stroke="#3a6ea8" stroke-width="1.15"/></svg>
<div class="t" style="left:76px;top:333px;font-size:12.5px;">LitPass</div>
<svg style="left:59px;top:349.5px" width="13" height="14" viewBox="0 0 13 14"><path d="M0.5 1.5 A1 1 0 0 1 1.5 0.5 H9 L12.5 4 V12.5 A1 1 0 0 1 11.5 13.5 H1.5 A1 1 0 0 1 0.5 12.5 Z" fill="#f4f4f4"/><path d="M2.6 5.4 H9.6 M2.6 7.8 H9.6 M2.6 10.2 H7" stroke="#3a6ea8" stroke-width="1.15"/></svg>
<div class="t" style="left:76px;top:349px;font-size:12.5px;">ShadowCasterPass</div>
<svg style="left:59px;top:365px" width="13" height="14" viewBox="0 0 13 14"><defs><linearGradient id="sg2" x1="0" y1="0" x2="1" y2="1"><stop offset="0" stop-color="#f0e890"/><stop offset="0.5" stop-color="#8fe0d0"/><stop offset="1" stop-color="#c890e0"/></linearGradient></defs><rect x="0.5" y="0.5" width="12" height="13" rx="1.5" fill="url(#sg2)"/><text x="6.5" y="11" font-family="Liberation Sans,sans-serif" font-size="10.5" font-weight="bold" text-anchor="middle" fill="#222">S</text></svg>
<div class="t" style="left:76px;top:365px;font-size:12.5px;">Unlit</div>
<svg style="left:59px;top:381.5px" width="13" height="14" viewBox="0 0 13 14"><path d="M0.5 1.5 A1 1 0 0 1 1.5 0.5 H9 L12.5 4 V12.5 A1 1 0 0 1 11.5 13.5 H1.5 A1 1 0 0 1 0.5 12.5 Z" fill="#f4f4f4"/><path d="M2.6 5.4 H9.6 M2.6 7.8 H9.6 M2.6 10.2 H7" stroke="#3a6ea8" stroke-width="1.15"/></svg>
<div class="t" style="left:76px;top:381px;font-size:12.5px;">UnlitPass</div>
<div class="trir" style="left:19px;top:400px"></div>
<svg style="left:31px;top:399px" width="13" height="11" viewBox="0 0 14 12"><path d="M0.5 1 H5.2 L6.6 2.8 H13.5 V11.5 H0.5 Z" fill="#505050"/></svg>
<div class="t" style="left:48px;top:397px;font-size:12.5px;">Scenes</div>
<div class="a" style="left:0;top:412px;width:286px;height:16px;background:#3a72b0"></div>
<svg style="left:31px;top:413.5px" width="13" height="14" viewBox="0 0 13 14"><path d="M0.5 1.5 A1 1 0 0 1 1.5 0.5 H9 L12.5 4 V12.5 A1 1 0 0 1 11.5 13.5 H1.5 A1 1 0 0 1 0.5 12.5 Z" fill="#f4f4f4"/><circle cx="7" cy="7.8" r="3.4" fill="#2d62b4"/><circle cx="6" cy="6.8" r="1.9" fill="#b8d2f4"/><path d="M2.6 11.2 H6.5" stroke="#2d62b4" stroke-width="1.3"/></svg>
<div class="t" style="left:48px;top:413px;font-size:12.5px;color:#fff;">Custom Render Pipeline Asset</div>
<svg style="left:31px;top:429.5px" width="14" height="14" viewBox="0 0 14 14"><circle cx="7" cy="7" r="6.5" fill="#2868c0"/><circle cx="5.6" cy="5.4" r="3.3" fill="#e4eefc"/></svg>
<div class="t" style="left:48px;top:429px;font-size:12.5px;">New Material 1</div>
<svg style="left:31px;top:445.5px" width="14" height="14" viewBox="0 0 14 14"><circle cx="7" cy="7" r="6.5" fill="#2868c0"/><circle cx="5.6" cy="5.4" r="3.3" fill="#e4eefc"/></svg>
<div class="t" style="left:48px;top:445px;font-size:12.5px;">New Material 2</div>
<svg style="left:31px;top:461.5px" width="14" height="14" viewBox="0 0 14 14"><circle cx="7" cy="7" r="6.5" fill="#2868c0"/><circle cx="5.6" cy="5.4" r="3.3" fill="#e4eefc"/></svg>
<div class="t" style="left:48px;top:461px;font-size:12.5px;">New Material</div>
<div class="a" style="left:29px;top:481px;width:16px;height:7px;background:#fff"></div>
<div class="t" style="left:48px;top:477px;font-size:12.5px;">Sphere Alpha Map</div>
<div class="trir" style="left:5px;top:496px"></div>
<svg style="left:17px;top:495px" width="13" height="11" viewBox="0 0 14 12"><path d="M0.5 1 H5.2 L6.6 2.8 H13.5 V11.5 H0.5 Z" fill="#505050"/></svg>
<div class="t" style="left:34px;top:493px;font-size:12.5px;font-weight:bold;">Packages</div>
</div>
<div class="a" style="left:1569px;top:112px;width:13px;height:509px;background:#c4c4c4;border-left:1px solid #b4b4b4"></div>
<div class="a" style="left:1572px;top:204px;width:9px;height:402px;background:#8b8b8b;border-radius:4.5px"></div>
<div class="tri" style="left:1572px;top:118px;transform:rotate(180deg);border-left-width:4px;border-right-width:4px;border-top-width:5px;border-top-color:#606060"></div>
<div class="tri" style="left:1572px;top:609px;border-left-width:4px;border-right-width:4px;border-top-width:5px;border-top-color:#606060"></div>
<div class="a" style="left:1283px;top:621px;width:299px;height:20px;background:#cbcbcb;border-top:1px solid #a8a8a8"></div>
<svg style="left:1289px;top:624.0px" width="12" height="13" viewBox="0 0 13 14"><path d="M0.5 1.5 A1 1 0 0 1 1.5 0.5 H9 L12.5 4 V12.5 A1 1 0 0 1 11.5 13.5 H1.5 A1 1 0 0 1 0.5 12.5 Z" fill="#f4f4f4"/><circle cx="7" cy="7.8" r="3.4" fill="#2d62b4"/><circle cx="6" cy="6.8" r="1.9" fill="#b8d2f4"/><path d="M2.6 11.2 H6.5" stroke="#2d62b4" stroke-width="1.3"/></svg>
<div class="t" style="left:1304px;top:624px;font-size:12.5px">Assets/Custom Render Pipeline Asset.asset</div>
<!-- INSPECTOR -->
<div class="a" style="left:1584px;top:73px;width:336px;height:19px;background:#a5a5a5"></div>
<div class="a" style="left:1584px;top:73px;width:94px;height:19px;background:#cbcbcb;border-radius:3px 3px 0 0"></div>
<svg style="left:1593px;top:78px" width="10" height="10" viewBox="0 0 11 11"><circle cx="5.5" cy="5.5" r="5.3" fill="#3c3c3c"/><path d="M5.5 4.6 V8.4" stroke="#cbcbcb" stroke-width="1.5"/><circle cx="5.5" cy="2.8" r="0.9" fill="#cbcbcb"/></svg>
<div class="t" style="left:1608px;top:76px;font-size:12.5px">Inspector</div>
<svg style="left:1884px;top:77px" width="9" height="10" viewBox="0 0 9 10"><rect x="0.5" y="4.5" width="8" height="5" rx="0.8" fill="none" stroke="#555" stroke-width="1"/><path d="M2.2 4.5 V2.8 A2.3 2.3 0 0 1 6.8 2.8" fill="none" stroke="#555" stroke-width="1"/></svg>
<div class="a kb" style="left:1905px;top:77px"></div>
<div class="a" style="left:1584px;top:92px;width:336px;height:549px;background:#c8c8c8"></div>
<div class="a" style="left:1584px;top:92px;width:336px;height:54px;background:#cbcbcb;border-bottom:1px solid #999"></div>
<svg style="left:1593px;top:99px" width="27" height="30" viewBox="0 0 27 30"><defs><radialGradient id="big" cx="0.68" cy="0.3" r="0.75"><stop offset="0" stop-color="#ffffff"/><stop offset="0.22" stop-color="#e0efff"/><stop offset="0.4" stop-color="#5a9ee6"/><stop offset="0.75" stop-color="#2a6cc2"/><stop offset="1" stop-color="#1f4f96"/></radialGradient></defs><path d="M1 3 A2 2 0 0 1 3 1 H19 L26 8 V27 A2 2 0 0 1 24 29 H3 A2 2 0 0 1 1 27 Z" fill="#fbfbfb" stroke="#d4d4d4" stroke-width="0.7"/><path d="M5.6 24.2 H14" stroke="#2a3340" stroke-width="1.6"/><circle cx="14" cy="17" r="7.4" fill="url(#big)" stroke="#2a3c58" stroke-width="0.9"/></svg>
<div class="a" style="left:1630px;top:95px;width:237px;height:20px;overflow:hidden"><div class="t" style="left:0;top:1.5px;font-size:13.6px;line-height:17px">Custom Render Pipeline Asset (Custom</div></div>
<svg style="left:1874px;top:99px" width="11" height="11" viewBox="0 0 11 11"><circle cx="5.5" cy="5.5" r="5.2" fill="#3c3c3c"/><path d="M3.8 4.2 A1.8 1.8 0 1 1 5.6 6 V7" fill="none" stroke="#cbcbcb" stroke-width="1.2"/><circle cx="5.6" cy="8.6" r="0.75" fill="#cbcbcb"/></svg>
<svg style="left:1890px;top:99px" width="12" height="11" viewBox="0 0 12 11"><path d="M0.5 3 H7 M9.5 3 H11.5 M0.5 8 H2.5 M5 8 H11.5 M8.2 0.8 V5.2 M3.8 5.8 V10.2" stroke="#3c3c3c" stroke-width="1.2" fill="none"/></svg>
<div class="a kb" style="left:1911px;top:99px"></div>
<div class="a" style="left:1872px;top:120px;width:43px;height:18px;background:#e0e0e0;border:1px solid #b2b2b2;border-radius:3px"></div><div class="t" style="left:1878px;top:122px;font-size:12.5px">Open</div>
<div class="t" style="left:1603px;top:151.6px;font-size:12.5px;color:#8a8a8a;">Script</div>
<div class="a" style="left:1724px;top:150px;width:191px;height:17px;background:#d0d0d0;border:1px solid #c0c0c0;border-radius:3px"></div>
<svg style="left:1728px;top:153px;opacity:.55" width="10" height="11" viewBox="0 0 13 14"><path d="M0.5 1.5 A1 1 0 0 1 1.5 0.5 H9 L12.5 4 V12.5 A1 1 0 0 1 11.5 13.5 H1.5 A1 1 0 0 1 0.5 12.5 Z" fill="#f4f4f4"/><circle cx="7" cy="7.8" r="3.4" fill="#8a9ab4"/><circle cx="6" cy="6.8" r="1.9" fill="#dde6f4"/></svg>
<div class="a" style="left:1741px;top:151.7px;width:156px;height:15px;overflow:hidden"><div class="t" style="left:0;top:0;font-size:12.5px;color:#8a8a8a">CustomRenderPipelineAsset</div></div>
<svg style="left:1900px;top:153px" width="11" height="11" viewBox="0 0 11 11"><circle cx="5.5" cy="5.5" r="4.6" fill="none" stroke="#8a8a8a" stroke-width="1"/><circle cx="5.5" cy="5.5" r="1.4" fill="#8a8a8a"/></svg>
<div class="a" style="left:1603px;top:169.6px;width:120px;height:15px;overflow:hidden"><div class="t" style="left:0;top:0;font-size:12.5px">Use Dynamic Batching</div></div>
<div class="cb ck" style="left:1724px;top:170px"></div>
<div class="t" style="left:1603px;top:188.6px;font-size:12.5px;">Use GPU Instancing</div>
<div class="cb ck" style="left:1724px;top:189px"></div>
<div class="t" style="left:1603px;top:207.6px;font-size:12.5px;">Use SRP Batcher</div>
<div class="cb ck" style="left:1724px;top:208px"></div>
<div class="tri" style="left:1590px;top:231px;border-top-color:#6e6e6e"></div>
<div class="t" style="left:1602px;top:227.6px;font-size:12.5px;">Shadows</div>
<div class="t" style="left:1618px;top:248.6px;font-size:12.5px;">Max Distance</div>
<div class="fld" style="left:1724px;top:246px;width:191px;height:18px"></div>
<div class="t" style="left:1728px;top:248.6px;font-size:12.5px;">100</div>
<div class="t" style="left:1618px;top:268.6px;font-size:12.5px;">Distance Fade</div>
<div class="a" style="left:1724px;top:274px;width:136px;height:2px;background:#8c8c8c;border-radius:1px"></div>
<div class="a" style="left:1763.5px;top:270px;width:10px;height:10px;border-radius:50%;background:#5a5a5a"></div>
<div class="fld" style="left:1866px;top:267px;width:49px;height:18px"></div>
<div class="t" style="left:1871px;top:269.6px;font-size:12.5px;">0.313</div>
<div class="tri" style="left:1604px;top:293px;border-top-color:#6e6e6e"></div>
<div class="t" style="left:1618px;top:289.6px;font-size:12.5px;">Directional</div>
<div class="t" style="left:1633px;top:310.6px;font-size:12.5px;">Atlas Size</div>
<div class="dd" style="left:1724px;top:308px;width:191px;height:18px"></div>
<div class="t" style="left:1728px;top:310.6px;font-size:12.5px;">1024</div>
<div class="tri" style="left:1901px;top:315px;border-left-width:4px;border-right-width:4px;border-top-width:5px"></div>
<div class="t" style="left:1633px;top:331.6px;font-size:12.5px;">Filter</div>
<div class="dd" style="left:1724px;top:329px;width:191px;height:18px"></div>
<div class="t" style="left:1728px;top:331.6px;font-size:12.5px;">PCF 7x7</div>
<div class="tri" style="left:1901px;top:336px;border-left-width:4px;border-right-width:4px;border-top-width:5px"></div>
<div class="t" style="left:1633px;top:352.6px;font-size:12.5px;">Cascade Count</div>
<div class="a" style="left:1724px;top:358px;width:136px;height:2px;background:#8c8c8c;border-radius:1px"></div>
<div class="a" style="left:1851.5px;top:354px;width:10px;height:10px;border-radius:50%;background:#5a5a5a"></div>
<div class="fld" style="left:1866px;top:351px;width:49px;height:18px"></div>
<div class="t" style="left:1871px;top:353.6px;font-size:12.5px;">4</div>
<div class="t" style="left:1633px;top:374.6px;font-size:12.5px;">Cascade Ratio 1</div>
<div class="a" style="left:1724px;top:380px;width:136px;height:2px;background:#8c8c8c;border-radius:1px"></div>
<div class="a" style="left:1736.5px;top:376px;width:10px;height:10px;border-radius:50%;background:#5a5a5a"></div>
<div class="fld" style="left:1866px;top:373px;width:49px;height:18px"></div>
<div class="t" style="left:1871px;top:375.6px;font-size:12.5px;">0.1</div>
<div class="t" style="left:1633px;top:396.6px;font-size:12.5px;">Cascade Ratio 2</div>
<div class="a" style="left:1724px;top:402px;width:136px;height:2px;background:#8c8c8c;border-radius:1px"></div>
<div class="a" style="left:1756.0px;top:398px;width:10px;height:10px;border-radius:50%;background:#5a5a5a"></div>
<div class="fld" style="left:1866px;top:395px;width:49px;height:18px"></div>
<div class="t" style="left:1871px;top:397.6px;font-size:12.5px;">0.25</div>
<div class="t" style="left:1633px;top:418.6px;font-size:12.5px;">Cascade Ratio 3</div>
<div class="a" style="left:1724px;top:424px;width:136px;height:2px;background:#8c8c8c;border-radius:1px"></div>
<div class="a" style="left:1788.0px;top:420px;width:10px;height:10px;border-radius:50%;background:#5a5a5a"></div>
<div class="fld" style="left:1866px;top:417px;width:49px;height:18px"></div>
<div class="t" style="left:1871px;top:419.6px;font-size:12.5px;">0.5</div>
<div class="t" style="left:1633px;top:440.6px;font-size:12.5px;">Cascade Fade</div>
<div class="a" style="left:1724px;top:446px;width:136px;height:2px;background:#8c8c8c;border-radius:1px"></div>
<div class="a" style="left:1760.0px;top:442px;width:10px;height:10px;border-radius:50%;background:#5a5a5a"></div>
<div class="fld" style="left:1866px;top:439px;width:49px;height:18px"></div>
<div class="t" style="left:1871px;top:441.6px;font-size:12.5px;">0.282</div>
<div class="a" style="left:1584px;top:566px;width:336px;height:1px;background:#999"></div>
<div class="a" style="left:1584px;top:567px;width:336px;height:25px;background:#cbcbcb"></div>
<div class="t" style="left:1588px;top:571px;font-size:12.5px;font-weight:bold;letter-spacing:.35px">Asset Labels</div>
<div class="a" style="left:1584px;top:592px;width:336px;height:1px;background:#999"></div>
<div class="a" style="left:1584px;top:593px;width:336px;height:48px;background:#cbcbcb"></div>
<svg style="left:1895px;top:597px" width="21" height="16" viewBox="0 0 21 16"><ellipse cx="10.5" cy="8" rx="10.3" ry="7.6" fill="#2d62b4"/><path d="M6 3.6 L10.6 3.4 L15.6 8.6 L11.6 12.4 L6.4 7.6 Z" fill="#fff"/><circle cx="8.2" cy="5.6" r="0.9" fill="#2d62b4"/></svg>
<div class="t" style="left:1588px;top:621.6px;font-size:12.5px;">AssetBundle</div>
<div class="dd" style="left:1680px;top:619px;width:170px;height:18px"></div>
<div class="t" style="left:1684px;top:621.6px;font-size:12.5px;">None</div>
<div class="tri" style="left:1836px;top:626px;border-left-width:4px;border-right-width:4px;border-top-width:5px"></div>
<div class="dd" style="left:1857px;top:619px;width:59px;height:18px"></div>
<div class="t" style="left:1861px;top:621.6px;font-size:12.5px;">None</div>
<div class="tri" style="left:1902px;top:626px;border-left-width:4px;border-right-width:4px;border-top-width:5px"></div>
<!-- CONSOLE -->
<div class="a" style="left:951px;top:643px;width:969px;height:19px;background:#a5a5a5"></div>
<div class="a" style="left:951px;top:643px;width:87px;height:19px;background:#cbcbcb;border-radius:3px 3px 0 0"></div>
<svg style="left:960px;top:647px" width="10" height="11" viewBox="0 0 10 11"><rect x="0.5" y="0.5" width="9" height="10" rx="1" fill="#4a4a4a"/><path d="M2 3 H8 M2 5.5 H8 M2 8 H8" stroke="#cbcbcb" stroke-width="1"/></svg>
<div class="t" style="left:975px;top:646px;font-size:12.5px">Console</div>
<div class="a kb" style="left:1905px;top:647px"></div>
<div class="a" style="left:951px;top:662px;width:969px;height:395px;background:#c8c8c8"></div>
<div class="a" style="left:951px;top:662px;width:969px;height:21px;background:#cbcbcb;border-bottom:1px solid #a4a4a4"></div>
<div class="t" style="left:955px;top:665.6px;font-size:12.5px">Clear</div>
<div class="a" style="left:990px;top:666px;width:1px;height:11px;background:#999"></div>
<div class="tri" style="left:995px;top:670px;border-left-width:4px;border-right-width:4px;border-top-width:5px"></div>
<div class="sep" style="left:1007px;top:662px;height:20px"></div>
<div class="sep" style="left:1066px;top:662px;height:20px"></div>
<div class="sep" style="left:1142px;top:662px;height:20px"></div>
<div class="sep" style="left:1194px;top:662px;height:20px"></div>
<div class="t" style="left:1012px;top:665.6px;font-size:12.5px">Collapse</div>
<div class="t" style="left:1072px;top:665.6px;font-size:12.5px">Error Pause</div>
<div class="t" style="left:1146px;top:665.6px;font-size:12.5px">Editor</div>
<div class="tri" style="left:1182px;top:670px;border-left-width:4px;border-right-width:4px;border-top-width:5px"></div>
<div class="fld" style="left:1515px;top:665px;width:300px;height:15px;border-radius:4px"></div>
<svg style="left:1519px;top:668px" width="9" height="9" viewBox="0 0 9 9"><circle cx="3.4" cy="3.4" r="2.5" fill="none" stroke="#555" stroke-width="1"/><path d="M5.2 5.2 L8 8" stroke="#555" stroke-width="1.2"/></svg>
<div class="a" style="left:1817px;top:662px;width:34px;height:20px;background:#e0e0e0;border-left:1px solid #a8a8a8"></div>
<div class="a" style="left:1851px;top:662px;width:34px;height:20px;background:#e0e0e0;border-left:1px solid #a8a8a8"></div>
<div class="a" style="left:1885px;top:662px;width:35px;height:20px;background:#e0e0e0;border-left:1px solid #a8a8a8"></div>
<svg style="left:1823px;top:665px" width="14" height="14" viewBox="0 0 14 14"><circle cx="7" cy="6.4" r="6" fill="#9a9a9a"/><path d="M9 11 L12 13.6 L11.6 9.4 Z" fill="#9a9a9a"/><path d="M7 2.6 V7.4" stroke="#e0e0e0" stroke-width="1.7"/><circle cx="7" cy="9.6" r="1" fill="#e0e0e0"/></svg>
<div class="t" style="left:1840px;top:665.6px;font-size:12.5px">0</div>
<svg style="left:1857px;top:665px" width="14" height="13" viewBox="0 0 14 13"><path d="M7 0.6 L13.6 12.4 H0.4 Z" fill="#9a9a9a"/><path d="M7 4 V8.4" stroke="#e0e0e0" stroke-width="1.6"/><circle cx="7" cy="10.4" r="0.9" fill="#e0e0e0"/></svg>
<div class="t" style="left:1874px;top:665.6px;font-size:12.5px">0</div>
<svg style="left:1891px;top:665px" width="14" height="14" viewBox="0 0 14 14"><path d="M4.2 0.6 H9.8 L13.4 4.2 V9.8 L9.8 13.4 H4.2 L0.6 9.8 V4.2 Z" fill="#9a9a9a"/><path d="M7 3 V8" stroke="#e0e0e0" stroke-width="1.7"/><circle cx="7" cy="10.4" r="1" fill="#e0e0e0"/></svg>
<div class="t" style="left:1908px;top:665.6px;font-size:12.5px">0</div>
<div class="a" style="left:951px;top:944px;width:969px;height:1px;background:#9a9a9a"></div>
</body></html>
